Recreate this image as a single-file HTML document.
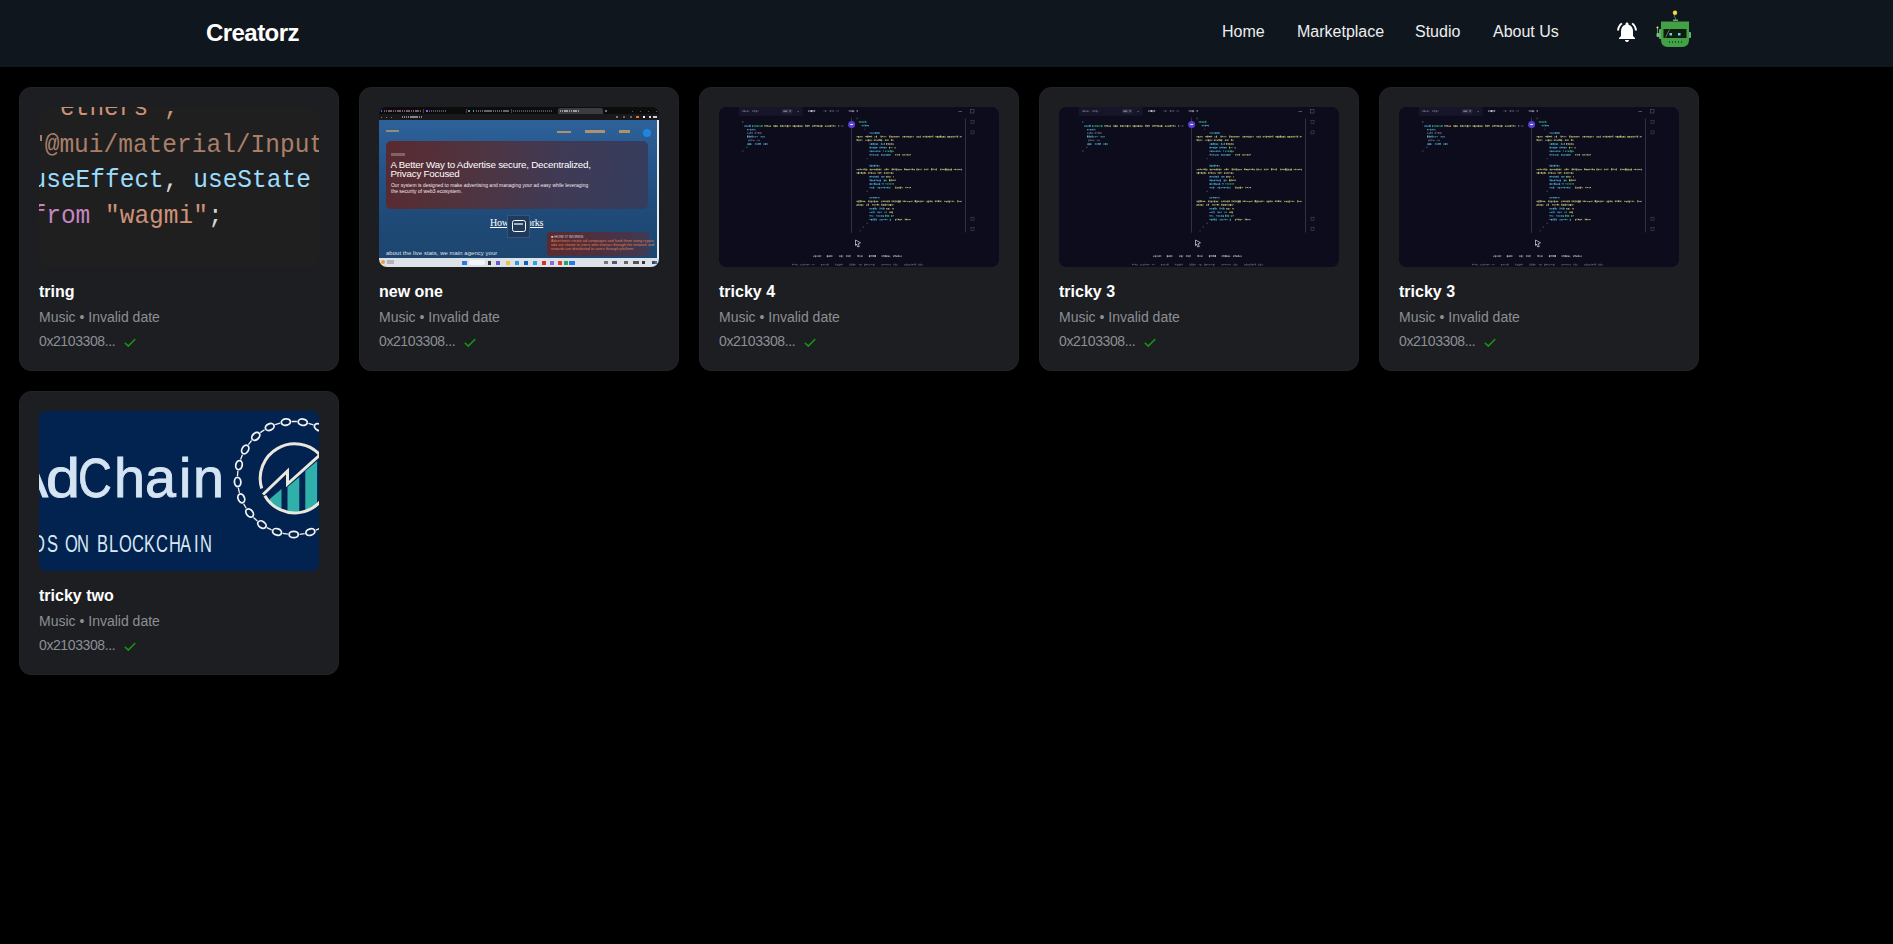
<!DOCTYPE html>
<html><head><meta charset="utf-8">
<style>
*{box-sizing:border-box;margin:0;padding:0}
html,body{width:1893px;height:944px;background:#000;overflow:hidden;font-family:"Liberation Sans",sans-serif}
.nav{position:absolute;left:0;top:0;width:1893px;height:67px;background:#10161d;border-bottom:1px solid #0e181c}
.brand{position:absolute;left:206px;top:17.5px;font-size:24px;font-weight:700;color:#fff;line-height:30px;letter-spacing:-0.55px}
.link{position:absolute;top:22px;font-size:16px;color:#eceef0;line-height:20px}
.card{position:absolute;width:320px;height:284px;background:#1d1e22;border-radius:12px;border:1px solid #222327}
.thumb{position:absolute;left:19px;top:19px;width:280px;height:160px;border-radius:8px;overflow:hidden;background:#1e1e1e}
.thumb svg{position:absolute;left:0;top:0}
.title{position:absolute;left:19px;top:194px;font-size:16px;font-weight:700;color:#fff;line-height:20px}
.meta{position:absolute;left:19px;top:220px;font-size:14px;color:#8c8f94;line-height:18px}
.addr{position:absolute;left:19px;top:244px;font-size:14px;color:#8c8f94;line-height:18px;letter-spacing:-0.4px}
.chk{position:absolute;left:104px;top:250px;width:12px;height:9px;overflow:visible}
.code{position:absolute;transform:scaleY(1.08);transform-origin:0 24px;font-family:"Liberation Mono",monospace;font-size:24.5px;line-height:36px;white-space:pre;left:-4.5px}
</style></head><body>
<div class="nav">
  <div class="brand">Creatorz</div>
  <div class="link" style="left:1222px">Home</div>
  <div class="link" style="left:1297px">Marketplace</div>
  <div class="link" style="left:1415px">Studio</div>
  <div class="link" style="left:1493px">About Us</div>
  <svg style="position:absolute;left:1615px;top:19.5px" width="24" height="24" viewBox="0 0 24 24"><path fill="#fff" d="M7.58 4.08 6.15 2.65C3.75 4.48 2.17 7.3 2.03 10.5h2c.15-2.65 1.51-4.97 3.55-6.42zm12.39 6.42h2c-.15-3.2-1.73-6.02-4.12-7.850l-1.42 1.43c2.02 1.45 3.39 3.77 3.54 6.42zM18 11c0-3.07-1.64-5.64-4.5-6.32V4c0-.83-.67-1.5-1.5-1.5s-1.5.67-1.5 1.5v.68C7.63 5.360 6 7.92 6 11v5l-2 2v1h16v-1l-2-2v-5zm-6 11c.14 0 .27-.01.4-.04.65-.14 1.18-.58 1.44-1.180.1-.24.15-.5.15-.78h-4c.01 1.1.9 2 2.01 2z"/></svg>
  <svg style="position:absolute;left:1650px;top:8px" width="48" height="44" viewBox="1650 8 48 44">
    <!-- antenna -->
    <path d="M1675 14.5 Q1673.6 16.5 1675.2 18 Q1676.2 19 1675.6 20.2" fill="none" stroke="#3f9a48" stroke-width="0.9"/>
    <circle cx="1675" cy="12.8" r="2.2" fill="#f5d846"/>
    <rect x="1673" y="19.5" width="5" height="1.5" fill="#6aa86e"/>
    <line x1="1657.5" y1="28" x2="1657.5" y2="34" stroke="#7fae7f" stroke-width="0.8"/>
    <circle cx="1657.5" cy="27.5" r="1.1" fill="#f3d27a"/>
    <!-- ears -->
    <rect x="1659" y="29" width="3" height="10" rx="1" fill="#5fae66"/>
    <rect x="1656.5" y="33" width="3" height="4" rx="1" fill="#7bbd7e"/>
    <rect x="1688" y="32" width="3" height="6" rx="1" fill="#6cb26f"/>
    <!-- head -->
    <path d="M1661 21.5 H1689 V40 Q1689 47 1682 47 H1668 Q1661 47 1661 40 Z" fill="#43a047"/>
    <rect x="1663.5" y="29" width="23" height="9" fill="#0d1d0c"/>
    <line x1="1665.5" y1="37.5" x2="1669.5" y2="29.5" stroke="#8a8f8a" stroke-width="0.7"/>
    <rect x="1669.5" y="33" width="2.5" height="2.5" fill="#79c8f0"/>
    <rect x="1678" y="33" width="2.5" height="2.5" fill="#79c8f0"/>
    <g fill="#1f5a22"><rect x="1669" y="41" width="1" height="2"/><rect x="1672" y="41" width="1" height="2"/><rect x="1675" y="41" width="1" height="2"/><rect x="1678" y="41" width="1" height="2"/><rect x="1681" y="41" width="1" height="2"/></g>
  </svg>
</div>
<div class="card" style="left:19px;top:87px">
  <div class="thumb" style="background:#1f1f1f">
    <div class="code" style="top:-16.3px;left:6.3px;color:#ce9178"> ethers";</div>
    <div style="position:absolute;left:0.5px;top:27.5px;width:2px;height:6px;background:#a87c66"></div>
    <div class="code" style="top:21.4px;left:-9px;color:#a97f6a">'@mui/material/Input</div>
    <div class="code" style="top:56.3px;left:-7.5px;color:#9cdcfe">useEffect<span style="color:#d4d4d4">,</span> useState</div>
    <div class="code" style="top:92px;left:-7.5px;color:#c586c0">from <span style="color:#ce9178">"wagmi"</span><span style="color:#d4d4d4">;</span></div>
  </div>
  <div class="title">tring</div>
  <div class="meta">Music • Invalid date</div>
  <div class="addr">0x2103308...</div>
  <svg class="chk" viewBox="0 0 12 9"><path d="M0.8 4.7 L4.3 8.1 L11.3 0.9" fill="none" stroke="#12990f" stroke-width="1.5"/></svg>
</div>
<div class="card" style="left:359px;top:87px">
  <div class="thumb" style="background:#1b1c1f">
    <!-- tab strip -->
    <div style="position:absolute;left:0;top:0;width:280px;height:7px;background:#0c0c0d"></div>
    <div style="position:absolute;left:44px;top:2px;width:0.6px;height:4px;background:#444"></div>
    <div style="position:absolute;left:87px;top:2px;width:0.6px;height:4px;background:#444"></div>
    <div style="position:absolute;left:132px;top:2px;width:0.6px;height:4px;background:#444"></div>
    <div style="position:absolute;left:179px;top:0.8px;width:44.5px;height:6.2px;background:#3b3c3f;border-radius:2px 2px 0 0"></div>
    <div style="position:absolute;left:2px;top:2.8px;width:1.3px;height:2.2px;background:#3d6ef0"></div>
    <div style="position:absolute;left:5px;top:3px;width:38px;height:1.8px;background:repeating-linear-gradient(90deg,#c9b 0 1.2px,transparent 1.2px 1.8px);opacity:.55"></div>
    <div style="position:absolute;left:47px;top:2.8px;width:1.6px;height:2px;background:#8a5cf0"></div>
    <div style="position:absolute;left:50px;top:3px;width:17px;height:1.8px;background:repeating-linear-gradient(90deg,#99c 0 1.2px,transparent 1.2px 2px);opacity:.5"></div>
    <div style="position:absolute;left:89px;top:3px;width:1.5px;height:1.8px;background:#ddd;opacity:.6"></div>
    <div style="position:absolute;left:93.5px;top:2.8px;width:1.4px;height:2.2px;background:#20b8d8"></div>
    <div style="position:absolute;left:97px;top:3px;width:34px;height:1.8px;background:repeating-linear-gradient(90deg,#bbc 0 1.2px,transparent 1.2px 1.9px);opacity:.5"></div>
    <div style="position:absolute;left:134px;top:3px;width:40px;height:1.8px;background:repeating-linear-gradient(90deg,#aab 0 1.2px,transparent 1.2px 2px);opacity:.45"></div>
    <div style="position:absolute;left:181px;top:3px;width:20px;height:1.8px;background:repeating-linear-gradient(90deg,#dde 0 1.2px,transparent 1.2px 1.8px);opacity:.6"></div>
    <div style="position:absolute;left:226px;top:3px;width:1.5px;height:1.8px;background:#bbb;opacity:.6"></div>
    <div style="position:absolute;left:253px;top:3.5px;width:25px;height:1px;background:repeating-linear-gradient(90deg,#aaa 0 1px,transparent 1px 8px);opacity:.5"></div>
    <!-- address bar -->
    <div style="position:absolute;left:0;top:7px;width:280px;height:6px;background:#19191b"></div>
    <div style="position:absolute;left:2px;top:9.5px;width:14px;height:1.2px;background:repeating-linear-gradient(90deg,#bbb 0 1.5px,transparent 1.5px 5px);opacity:.6"></div>
    <div style="position:absolute;left:23px;top:9px;width:21px;height:1.8px;background:repeating-linear-gradient(90deg,#ccd 0 1.3px,transparent 1.3px 1.9px);opacity:.6"></div>
    <div style="position:absolute;left:237px;top:8.5px;width:41px;height:2.5px;background:linear-gradient(90deg,#777 0 5%,transparent 5% 17%,#666 17% 21%,transparent 21% 33%,#666 33% 38%,transparent 38% 49%,#e8762c 49% 56%,transparent 56% 65%,#f4f4f4 65% 71%,transparent 71% 81%,#ddd 81% 85%,transparent 85% 90%,#ccd 90% 100%)"></div>
    <!-- page -->
    <div style="position:absolute;left:0;top:13px;width:279px;height:138px;background:linear-gradient(180deg,#2d6299 0%,#255489 35%,#1f4a78 70%,#1d466f 100%)"></div>
    <div style="position:absolute;left:278px;top:13px;width:1.5px;height:138px;background:#e8eef5"></div>
    <div style="position:absolute;left:7px;top:23px;width:13px;height:2px;background:#c9a06a;opacity:.7"></div>
    <div style="position:absolute;left:178px;top:24px;width:14px;height:2px;background:#e0a060;opacity:.75"></div>
    <div style="position:absolute;left:206px;top:23px;width:20px;height:3px;background:#e0a060;opacity:.75"></div>
    <div style="position:absolute;left:240px;top:23px;width:11px;height:3px;background:#e0a060;opacity:.75"></div>
    <div style="position:absolute;left:264px;top:21.5px;width:8px;height:8px;background:#1f86e0;border-radius:50%"></div>
    <!-- hero -->
    <div style="position:absolute;left:7.3px;top:34.2px;width:262px;height:68px;border-radius:5px;background:linear-gradient(100deg,#5a2a30 0%,#4e3440 35%,#403a55 65%,#343d5e 100%)"></div>
    <div style="position:absolute;left:12px;top:46px;width:14px;height:3px;background:#9a8a8a;opacity:.6"></div>
    <div style="position:absolute;left:11.5px;top:53px;font-size:9.76px;line-height:9.2px;color:#fff;white-space:nowrap;letter-spacing:-0.2px">A Better Way to Advertise secure, Decentralized,<br>Privacy Focused</div>
    <div style="position:absolute;left:12px;top:76px;font-size:4.9px;line-height:5.5px;color:#f0eaf0;white-space:nowrap;letter-spacing:0.05px">Our system is designed to make advertising and managing your ad easy while leveraging<br>the security of web3 ecosystem.</div>
    <!-- how it works -->
    <div style="position:absolute;left:111px;top:111px;font-family:'Liberation Serif',serif;font-size:10px;line-height:10px;color:#fff;text-decoration:underline;white-space:nowrap;letter-spacing:-0.2px">How it Works</div>
    <div style="position:absolute;left:128.4px;top:108.2px;width:23px;height:23.3px;background:#1f3a5b;border:0.5px solid #35557a"></div>
    <div style="position:absolute;left:133px;top:113.3px;width:13.8px;height:12.2px;border:1.2px solid #fff;border-radius:2.5px"></div>
    <div style="position:absolute;left:135px;top:116px;width:9px;height:2px;background:#fff;opacity:.6"></div>
    <!-- small box -->
    <div style="position:absolute;left:168.2px;top:125px;width:101.6px;height:23.8px;border-radius:3px;background:linear-gradient(100deg,#5a2b30 0%,#4d3040 50%,#3d3a55 100%)"></div>
    <div style="position:absolute;left:172px;top:128px;font-size:3.8px;line-height:4.1px;color:#e8e0e0;white-space:nowrap;opacity:.85">■ HOW IT WORKS</div>
    <div style="position:absolute;left:172px;top:132px;font-size:3.6px;line-height:4.1px;color:#e2814f;white-space:nowrap;letter-spacing:0.1px">Advertisers create ad campaigns and fund them using crypto.<br>ads are shown to users who interact through the network and<br>rewards are distributed to users through platform</div>
    <div style="position:absolute;left:7px;top:143px;font-size:5.85px;line-height:7px;color:#eef2f7;white-space:nowrap;letter-spacing:0.1px;opacity:.9">about the live stats, we main agency your</div>
    <!-- taskbar -->
    <div style="position:absolute;left:0;top:151px;width:280px;height:9px;background:#dde1e8"></div>
    <div style="position:absolute;left:2px;top:153px;width:4px;height:4px;background:#f0a030;border-radius:50%"></div>
    <div style="position:absolute;left:8px;top:153px;width:7px;height:4px;background:#889;opacity:.5"></div>
    <div style="position:absolute;left:83px;top:153.5px;width:5px;height:4px;background:#2a7be0"></div>
    <div style="position:absolute;left:90px;top:153px;width:16px;height:5px;background:#f4f5f8;border-radius:2px"></div>
    <div style="position:absolute;left:109px;top:153.5px;width:80px;height:4px;background:linear-gradient(90deg,#333 0 4%,transparent 4% 10%,#6a5acd 10% 15%,transparent 15% 22%,#f0c040 22% 28%,transparent 28% 34%,#2a9be0 34% 39%,transparent 39% 45%,#1060c0 45% 50%,transparent 50% 56%,#30a0e0 56% 61%,transparent 61% 67%,#d03030 67% 72%,transparent 72% 78%,#8a6ae0 78% 83%,transparent 83% 88%,#e04030 88% 93%,transparent 93% 95%,#30a060 95% 100%)"></div>
    <div style="position:absolute;left:190px;top:153.5px;width:6px;height:4px;background:#2a7be0"></div>
    <div style="position:absolute;left:225px;top:154px;width:53px;height:3px;background:linear-gradient(90deg,#777 0 8%,transparent 8% 15%,#557 15% 24%,transparent 24% 38%,#666 38% 46%,transparent 46% 55%,#555 55% 66%,transparent 66% 72%,#333 72% 78%,transparent 78% 90%,#445 90% 96%,#2a7be0 96%)"></div>
  </div>
  <div class="title">new one</div>
  <div class="meta">Music • Invalid date</div>
  <div class="addr">0x2103308...</div>
  <svg class="chk" viewBox="0 0 12 9"><path d="M0.8 4.7 L4.3 8.1 L11.3 0.9" fill="none" stroke="#12990f" stroke-width="1.5"/></svg>
</div>
<svg width="0" height="0" style="position:absolute"><defs><g id="codeimg"><rect x="0" y="0" width="280" height="160" fill="#0c0c1d"/>
<rect x="19.7" y="0" width="64" height="8.8" fill="#16152a"/>
<rect x="23.40" y="3.28" width="1.28" height="1.6" fill="#8a8a9a" opacity="0.67"/><rect x="24.90" y="3.35" width="1.40" height="1.6" fill="#8a8a9a" opacity="0.66"/><rect x="26.48" y="3.62" width="1.15" height="1.0" fill="#8a8a9a" opacity="0.68"/><rect x="28.01" y="3.49" width="1.30" height="1.6" fill="#8a8a9a" opacity="0.63"/><rect x="29.67" y="3.73" width="0.80" height="1.0" fill="#8a8a9a" opacity="0.50"/><rect x="33.29" y="3.38" width="1.39" height="1.4" fill="#8a8a9a" opacity="0.67"/><rect x="35.01" y="3.10" width="1.32" height="1.6" fill="#8a8a9a" opacity="0.51"/><rect x="36.71" y="3.30" width="1.20" height="2.0" fill="#8a8a9a" opacity="0.67"/><rect x="38.31" y="3.51" width="1.16" height="1.2" fill="#8a8a9a" opacity="0.50"/>
<rect x="63" y="2" width="10.5" height="4.4" rx="1" fill="#2a2838"/>
<rect x="64.50" y="3.78" width="1.15" height="1.0" fill="#e0e0e8" opacity="0.76"/><rect x="65.80" y="3.59" width="1.10" height="1.0" fill="#e0e0e8" opacity="0.80"/><rect x="67.19" y="3.61" width="1.04" height="1.2" fill="#e0e0e8" opacity="0.62"/><rect x="70.47" y="3.45" width="1.38" height="1.0" fill="#e0e0e8" opacity="0.73"/>
<rect x="78.5" y="4.0" width="1.5" height="1" fill="#888" opacity="0.6"/>
<rect x="89.00" y="3.48" width="1.34" height="1.2" fill="#f0f0f5" opacity="0.64"/><rect x="90.75" y="3.15" width="1.07" height="1.6" fill="#f0f0f5" opacity="0.70"/><rect x="92.04" y="3.02" width="1.13" height="2.0" fill="#f0f0f5" opacity="0.82"/><rect x="93.40" y="3.16" width="1.20" height="2.0" fill="#f0f0f5" opacity="0.62"/><rect x="95.09" y="3.20" width="1.11" height="1.4" fill="#f0f0f5" opacity="0.75"/>
<rect x="104.50" y="3.31" width="1.10" height="1.2" fill="#8a8a9a" opacity="0.49"/><rect x="105.97" y="3.09" width="1.06" height="2.0" fill="#8a8a9a" opacity="0.52"/><rect x="107.49" y="3.42" width="0.68" height="1.2" fill="#8a8a9a" opacity="0.46"/><rect x="110.76" y="2.98" width="1.31" height="2.0" fill="#8a8a9a" opacity="0.59"/><rect x="112.53" y="3.12" width="1.30" height="1.6" fill="#8a8a9a" opacity="0.44"/><rect x="114.16" y="3.20" width="1.02" height="1.6" fill="#8a8a9a" opacity="0.57"/><rect x="117.12" y="3.45" width="1.36" height="1.0" fill="#8a8a9a" opacity="0.51"/><rect x="118.86" y="3.51" width="1.14" height="1.0" fill="#8a8a9a" opacity="0.59"/>
<rect x="129.70" y="3.42" width="1.22" height="1.0" fill="#f0f0f5" opacity="0.67"/><rect x="131.26" y="3.54" width="1.49" height="1.0" fill="#f0f0f5" opacity="0.82"/><rect x="133.24" y="3.13" width="1.33" height="2.0" fill="#f0f0f5" opacity="0.63"/><rect x="134.73" y="3.48" width="0.39" height="1.4" fill="#f0f0f5" opacity="0.84"/><rect x="137.58" y="3.25" width="1.37" height="1.4" fill="#f0f0f5" opacity="0.61"/>
<rect x="239.5" y="4.1" width="3.5" height="0.8" fill="#777" opacity="0.8"/>
<rect x="251.5" y="2.5" width="3.5" height="3.5" fill="none" stroke="#999" stroke-width="0.5" opacity="0.6"/>
<rect x="23.00" y="14.47" width="1.47" height="1.2" fill="#6a6a80" opacity="0.78"/>
<rect x="25.30" y="18.38" width="1.44" height="1.6" fill="#5fd0fa" opacity="0.57"/><rect x="27.06" y="18.15" width="1.01" height="1.6" fill="#5fd0fa" opacity="0.56"/><rect x="28.24" y="18.70" width="1.05" height="1.0" fill="#5fd0fa" opacity="0.77"/><rect x="29.69" y="17.98" width="1.19" height="2.0" fill="#5fd0fa" opacity="0.67"/><rect x="31.23" y="17.81" width="0.77" height="2.0" fill="#5fd0fa" opacity="0.70"/>
<rect x="33.00" y="18.06" width="1.25" height="2.0" fill="#48dc96" opacity="0.63"/><rect x="34.71" y="18.47" width="1.18" height="1.2" fill="#48dc96" opacity="0.57"/><rect x="36.11" y="18.20" width="1.45" height="1.6" fill="#48dc96" opacity="0.58"/><rect x="37.85" y="18.32" width="1.13" height="1.6" fill="#48dc96" opacity="0.69"/><rect x="39.20" y="18.43" width="1.11" height="1.2" fill="#48dc96" opacity="0.60"/><rect x="40.50" y="18.58" width="1.25" height="1.0" fill="#48dc96" opacity="0.74"/><rect x="42.00" y="18.19" width="1.08" height="1.6" fill="#48dc96" opacity="0.73"/><rect x="43.52" y="18.00" width="0.48" height="2.0" fill="#48dc96" opacity="0.60"/>
<rect x="45.00" y="18.41" width="1.04" height="1.0" fill="#f6f48e" opacity="0.71"/><rect x="46.42" y="18.22" width="1.14" height="1.4" fill="#f6f48e" opacity="0.75"/><rect x="47.72" y="18.08" width="1.07" height="1.6" fill="#f6f48e" opacity="0.74"/><rect x="49.03" y="18.69" width="1.39" height="1.0" fill="#f6f48e" opacity="0.59"/><rect x="50.61" y="18.48" width="1.27" height="1.4" fill="#f6f48e" opacity="0.72"/><rect x="54.29" y="18.21" width="1.01" height="1.6" fill="#f6f48e" opacity="0.57"/><rect x="55.52" y="18.08" width="1.39" height="2.0" fill="#f6f48e" opacity="0.68"/><rect x="57.27" y="18.34" width="1.38" height="1.6" fill="#f6f48e" opacity="0.73"/><rect x="61.01" y="18.18" width="1.19" height="1.6" fill="#f6f48e" opacity="0.71"/><rect x="62.67" y="18.06" width="1.19" height="2.0" fill="#f6f48e" opacity="0.68"/><rect x="64.30" y="18.36" width="1.17" height="1.4" fill="#f6f48e" opacity="0.61"/><rect x="65.87" y="18.39" width="1.41" height="1.0" fill="#f6f48e" opacity="0.78"/><rect x="67.77" y="18.19" width="1.49" height="2.0" fill="#f6f48e" opacity="0.78"/><rect x="69.50" y="18.44" width="1.36" height="1.0" fill="#f6f48e" opacity="0.58"/><rect x="71.17" y="18.29" width="0.88" height="1.4" fill="#f6f48e" opacity="0.57"/><rect x="73.64" y="18.37" width="1.09" height="1.4" fill="#f6f48e" opacity="0.78"/><rect x="75.04" y="18.14" width="1.50" height="2.0" fill="#f6f48e" opacity="0.73"/><rect x="77.02" y="18.60" width="1.25" height="1.0" fill="#f6f48e" opacity="0.67"/><rect x="78.61" y="18.06" width="1.42" height="2.0" fill="#f6f48e" opacity="0.69"/><rect x="80.47" y="18.37" width="1.28" height="1.4" fill="#f6f48e" opacity="0.79"/><rect x="82.21" y="18.44" width="1.30" height="1.4" fill="#f6f48e" opacity="0.79"/><rect x="86.20" y="17.80" width="1.27" height="2.0" fill="#f6f48e" opacity="0.65"/><rect x="87.80" y="18.22" width="1.02" height="1.6" fill="#f6f48e" opacity="0.80"/><rect x="89.02" y="18.23" width="1.05" height="1.2" fill="#f6f48e" opacity="0.69"/><rect x="90.36" y="18.11" width="0.65" height="1.6" fill="#f6f48e" opacity="0.67"/><rect x="93.16" y="18.21" width="1.45" height="1.6" fill="#f6f48e" opacity="0.59"/><rect x="94.90" y="18.15" width="1.01" height="1.4" fill="#f6f48e" opacity="0.75"/><rect x="96.08" y="18.20" width="1.10" height="1.2" fill="#f6f48e" opacity="0.63"/><rect x="97.58" y="18.04" width="1.12" height="1.6" fill="#f6f48e" opacity="0.74"/><rect x="98.89" y="18.39" width="1.26" height="1.4" fill="#f6f48e" opacity="0.73"/><rect x="100.60" y="18.33" width="1.01" height="1.6" fill="#f6f48e" opacity="0.71"/><rect x="101.95" y="18.06" width="1.43" height="2.0" fill="#f6f48e" opacity="0.69"/><rect x="105.92" y="18.46" width="1.12" height="1.4" fill="#f6f48e" opacity="0.64"/><rect x="107.29" y="18.51" width="1.46" height="1.2" fill="#f6f48e" opacity="0.61"/><rect x="108.94" y="18.49" width="1.44" height="1.2" fill="#f6f48e" opacity="0.62"/><rect x="110.57" y="18.22" width="1.42" height="1.6" fill="#f6f48e" opacity="0.73"/><rect x="112.20" y="18.34" width="1.31" height="1.0" fill="#f6f48e" opacity="0.70"/><rect x="113.79" y="18.15" width="1.41" height="1.4" fill="#f6f48e" opacity="0.68"/><rect x="115.62" y="18.52" width="1.01" height="1.2" fill="#f6f48e" opacity="0.68"/><rect x="119.27" y="18.06" width="0.73" height="1.6" fill="#f6f48e" opacity="0.60"/>
<rect x="120.00" y="18.53" width="1.46" height="1.0" fill="#6a6a80" opacity="0.44"/><rect x="121.85" y="18.43" width="1.04" height="1.0" fill="#6a6a80" opacity="0.50"/><rect x="123.22" y="17.95" width="1.22" height="2.0" fill="#6a6a80" opacity="0.53"/>
<rect x="28.00" y="21.96" width="1.18" height="1.4" fill="#5fd0fa" opacity="0.64"/><rect x="29.39" y="22.13" width="1.26" height="1.0" fill="#5fd0fa" opacity="0.62"/><rect x="31.09" y="21.93" width="1.44" height="1.6" fill="#5fd0fa" opacity="0.64"/><rect x="32.88" y="21.91" width="1.17" height="1.4" fill="#5fd0fa" opacity="0.62"/><rect x="34.46" y="21.75" width="1.08" height="1.6" fill="#5fd0fa" opacity="0.68"/><rect x="35.88" y="22.01" width="0.52" height="1.6" fill="#5fd0fa" opacity="0.70"/>
<rect x="28.00" y="25.66" width="1.23" height="1.0" fill="#c8c8d0" opacity="0.55"/><rect x="29.70" y="25.48" width="1.02" height="1.4" fill="#c8c8d0" opacity="0.49"/><rect x="30.99" y="24.87" width="1.33" height="2.0" fill="#c8c8d0" opacity="0.40"/><rect x="32.65" y="25.48" width="1.25" height="1.2" fill="#c8c8d0" opacity="0.51"/><rect x="35.61" y="25.28" width="1.37" height="1.4" fill="#c8c8d0" opacity="0.47"/><rect x="37.40" y="25.34" width="1.32" height="1.0" fill="#c8c8d0" opacity="0.43"/><rect x="39.19" y="24.97" width="1.28" height="2.0" fill="#c8c8d0" opacity="0.47"/><rect x="40.91" y="25.32" width="1.05" height="1.6" fill="#c8c8d0" opacity="0.40"/><rect x="42.32" y="25.45" width="0.68" height="1.0" fill="#c8c8d0" opacity="0.54"/>
<rect x="28.00" y="28.52" width="1.27" height="2.0" fill="#5fd0fa" opacity="0.84"/><rect x="29.57" y="28.62" width="1.26" height="2.0" fill="#5fd0fa" opacity="0.73"/><rect x="31.15" y="29.07" width="1.13" height="1.4" fill="#5fd0fa" opacity="0.79"/><rect x="32.45" y="28.52" width="1.39" height="2.0" fill="#5fd0fa" opacity="0.63"/><rect x="34.25" y="29.10" width="1.19" height="1.4" fill="#5fd0fa" opacity="0.61"/><rect x="35.94" y="29.32" width="1.47" height="1.0" fill="#5fd0fa" opacity="0.65"/><rect x="37.81" y="28.92" width="0.89" height="1.2" fill="#5fd0fa" opacity="0.62"/><rect x="41.57" y="29.14" width="1.48" height="1.2" fill="#5fd0fa" opacity="0.62"/><rect x="43.41" y="29.24" width="1.23" height="1.2" fill="#5fd0fa" opacity="0.69"/><rect x="44.85" y="29.17" width="0.85" height="1.2" fill="#5fd0fa" opacity="0.71"/>
<rect x="29.00" y="32.53" width="1.39" height="2.0" fill="#c8c8d0" opacity="0.33"/><rect x="30.64" y="32.45" width="1.06" height="1.6" fill="#c8c8d0" opacity="0.44"/><rect x="32.13" y="32.61" width="1.31" height="1.4" fill="#c8c8d0" opacity="0.40"/><rect x="33.85" y="32.85" width="1.35" height="1.2" fill="#c8c8d0" opacity="0.42"/><rect x="35.41" y="32.95" width="0.36" height="1.2" fill="#c8c8d0" opacity="0.32"/><rect x="37.68" y="32.79" width="1.31" height="1.0" fill="#c8c8d0" opacity="0.35"/><rect x="39.41" y="32.82" width="1.46" height="1.2" fill="#c8c8d0" opacity="0.40"/>
<rect x="28.00" y="36.54" width="1.17" height="1.2" fill="#5fd0fa" opacity="0.61"/><rect x="29.36" y="36.14" width="1.40" height="2.0" fill="#5fd0fa" opacity="0.79"/><rect x="31.07" y="36.32" width="1.37" height="1.6" fill="#5fd0fa" opacity="0.69"/><rect x="35.88" y="36.37" width="1.27" height="1.2" fill="#5fd0fa" opacity="0.69"/><rect x="37.34" y="36.52" width="1.44" height="1.0" fill="#5fd0fa" opacity="0.71"/><rect x="39.12" y="36.12" width="1.41" height="1.6" fill="#5fd0fa" opacity="0.79"/><rect x="40.71" y="35.83" width="1.10" height="2.0" fill="#5fd0fa" opacity="0.67"/><rect x="44.35" y="36.36" width="1.07" height="1.4" fill="#5fd0fa" opacity="0.68"/><rect x="45.89" y="36.23" width="1.16" height="1.6" fill="#5fd0fa" opacity="0.83"/><rect x="47.53" y="36.21" width="0.97" height="1.6" fill="#5fd0fa" opacity="0.85"/>
<rect x="27.0" y="39.7" width="1.5" height="1.2" fill="#6a6a80" opacity="0.6"/>
<rect x="23.0" y="43.4" width="1.5" height="1.2" fill="#6a6a80" opacity="0.6"/>
<rect x="132.2" y="10.6" width="0.8" height="115" fill="#3a3a52"/>
<rect x="246.2" y="11.5" width="0.8" height="114" fill="#3a3a52"/>
<circle cx="132.6" cy="17.5" r="3.5" fill="#5b3fd8"/>
<rect x="131.2" y="17.1" width="2.8" height="0.9" fill="#fff" opacity="1"/>
<rect x="137.50" y="10.40" width="1.36" height="2.0" fill="#6a6a80" opacity="0.49"/>
<rect x="139.70" y="14.40" width="1.19" height="1.2" fill="#48dc96" opacity="0.65"/><rect x="141.18" y="13.93" width="1.08" height="2.0" fill="#48dc96" opacity="0.60"/><rect x="142.67" y="14.32" width="1.44" height="1.4" fill="#48dc96" opacity="0.61"/><rect x="144.28" y="14.39" width="1.08" height="1.4" fill="#48dc96" opacity="0.72"/><rect x="145.79" y="13.82" width="1.03" height="2.0" fill="#48dc96" opacity="0.69"/><rect x="147.09" y="14.56" width="0.91" height="1.0" fill="#48dc96" opacity="0.58"/>
<rect x="142.60" y="18.08" width="1.32" height="1.2" fill="#5fd0fa" opacity="0.68"/><rect x="144.39" y="17.76" width="1.17" height="1.6" fill="#5fd0fa" opacity="0.64"/><rect x="146.05" y="17.80" width="1.34" height="1.6" fill="#5fd0fa" opacity="0.75"/><rect x="147.56" y="18.06" width="1.31" height="1.0" fill="#5fd0fa" opacity="0.76"/><rect x="149.25" y="17.93" width="0.75" height="1.6" fill="#5fd0fa" opacity="0.77"/>
<rect x="145.00" y="21.77" width="1.36" height="1.0" fill="#6a6a80" opacity="0.50"/>
<rect x="150.50" y="25.33" width="1.19" height="1.2" fill="#5fd0fa" opacity="0.65"/><rect x="152.02" y="25.49" width="1.14" height="1.0" fill="#5fd0fa" opacity="0.74"/><rect x="153.42" y="25.56" width="1.08" height="1.2" fill="#5fd0fa" opacity="0.74"/><rect x="154.65" y="25.43" width="1.24" height="1.0" fill="#5fd0fa" opacity="0.61"/><rect x="156.17" y="25.09" width="1.29" height="2.0" fill="#5fd0fa" opacity="0.70"/><rect x="157.69" y="25.26" width="1.09" height="1.4" fill="#5fd0fa" opacity="0.78"/><rect x="159.26" y="24.99" width="1.31" height="2.0" fill="#5fd0fa" opacity="0.62"/>
<rect x="137.50" y="29.19" width="1.27" height="1.0" fill="#f6f48e" opacity="0.61"/><rect x="138.94" y="29.09" width="1.47" height="1.6" fill="#f6f48e" opacity="0.75"/><rect x="140.84" y="29.26" width="1.39" height="1.0" fill="#f6f48e" opacity="0.62"/><rect x="142.38" y="28.98" width="1.20" height="1.4" fill="#f6f48e" opacity="0.62"/><rect x="146.39" y="29.00" width="1.39" height="1.2" fill="#f6f48e" opacity="0.77"/><rect x="148.11" y="28.61" width="1.32" height="2.0" fill="#f6f48e" opacity="0.69"/><rect x="149.63" y="29.08" width="1.39" height="1.0" fill="#f6f48e" opacity="0.78"/><rect x="151.22" y="28.91" width="1.06" height="1.4" fill="#f6f48e" opacity="0.73"/><rect x="152.46" y="28.73" width="0.67" height="1.6" fill="#f6f48e" opacity="0.74"/><rect x="155.39" y="29.27" width="1.09" height="1.2" fill="#f6f48e" opacity="0.58"/><rect x="156.92" y="28.67" width="1.10" height="2.0" fill="#f6f48e" opacity="0.68"/><rect x="161.51" y="28.62" width="1.20" height="2.0" fill="#f6f48e" opacity="0.67"/><rect x="163.11" y="28.94" width="1.18" height="1.2" fill="#f6f48e" opacity="0.65"/><rect x="164.60" y="29.26" width="1.48" height="1.0" fill="#f6f48e" opacity="0.56"/><rect x="166.37" y="29.02" width="0.98" height="1.2" fill="#f6f48e" opacity="0.59"/><rect x="170.14" y="28.56" width="1.36" height="2.0" fill="#f6f48e" opacity="0.71"/><rect x="171.98" y="29.10" width="1.37" height="1.4" fill="#f6f48e" opacity="0.69"/><rect x="173.53" y="28.99" width="1.09" height="1.6" fill="#f6f48e" opacity="0.64"/><rect x="175.11" y="28.98" width="1.28" height="1.4" fill="#f6f48e" opacity="0.65"/><rect x="176.57" y="29.17" width="1.31" height="1.2" fill="#f6f48e" opacity="0.73"/><rect x="178.10" y="28.94" width="1.20" height="1.6" fill="#f6f48e" opacity="0.58"/><rect x="179.53" y="29.17" width="1.08" height="1.0" fill="#f6f48e" opacity="0.75"/><rect x="183.47" y="29.21" width="1.07" height="1.2" fill="#f6f48e" opacity="0.76"/><rect x="184.83" y="28.95" width="1.17" height="1.6" fill="#f6f48e" opacity="0.73"/><rect x="186.36" y="29.16" width="1.16" height="1.2" fill="#f6f48e" opacity="0.71"/><rect x="187.67" y="28.92" width="1.17" height="1.4" fill="#f6f48e" opacity="0.67"/><rect x="189.18" y="29.12" width="1.10" height="1.4" fill="#f6f48e" opacity="0.76"/><rect x="190.65" y="28.86" width="1.08" height="2.0" fill="#f6f48e" opacity="0.69"/><rect x="192.00" y="29.13" width="1.25" height="1.2" fill="#f6f48e" opacity="0.61"/><rect x="193.73" y="29.13" width="1.09" height="1.2" fill="#f6f48e" opacity="0.57"/><rect x="197.48" y="28.98" width="1.24" height="1.6" fill="#f6f48e" opacity="0.64"/><rect x="199.19" y="29.05" width="1.18" height="1.6" fill="#f6f48e" opacity="0.67"/><rect x="200.78" y="28.72" width="0.93" height="2.0" fill="#f6f48e" opacity="0.69"/><rect x="203.60" y="29.04" width="1.50" height="1.4" fill="#f6f48e" opacity="0.59"/><rect x="205.54" y="28.90" width="1.14" height="1.4" fill="#f6f48e" opacity="0.70"/><rect x="207.12" y="28.82" width="1.09" height="2.0" fill="#f6f48e" opacity="0.67"/><rect x="208.51" y="29.02" width="1.39" height="1.2" fill="#f6f48e" opacity="0.72"/><rect x="210.31" y="28.76" width="1.19" height="2.0" fill="#f6f48e" opacity="0.74"/><rect x="211.70" y="29.06" width="1.21" height="1.0" fill="#f6f48e" opacity="0.65"/><rect x="213.26" y="28.55" width="1.09" height="2.0" fill="#f6f48e" opacity="0.62"/><rect x="216.37" y="29.06" width="1.36" height="1.2" fill="#f6f48e" opacity="0.68"/><rect x="217.91" y="28.87" width="1.17" height="2.0" fill="#f6f48e" opacity="0.70"/><rect x="219.38" y="29.04" width="1.14" height="1.6" fill="#f6f48e" opacity="0.77"/><rect x="220.81" y="28.55" width="1.22" height="2.0" fill="#f6f48e" opacity="0.79"/><rect x="222.30" y="29.06" width="1.26" height="1.6" fill="#f6f48e" opacity="0.64"/><rect x="223.73" y="28.99" width="1.36" height="1.6" fill="#f6f48e" opacity="0.70"/><rect x="225.50" y="28.85" width="0.92" height="2.0" fill="#f6f48e" opacity="0.62"/><rect x="228.29" y="28.98" width="1.49" height="1.6" fill="#f6f48e" opacity="0.69"/><rect x="230.01" y="29.08" width="1.15" height="1.6" fill="#f6f48e" opacity="0.77"/><rect x="231.66" y="29.15" width="1.37" height="1.4" fill="#f6f48e" opacity="0.66"/><rect x="233.46" y="28.93" width="1.11" height="1.6" fill="#f6f48e" opacity="0.78"/><rect x="234.75" y="29.35" width="1.40" height="1.0" fill="#f6f48e" opacity="0.70"/><rect x="236.46" y="28.81" width="1.15" height="1.4" fill="#f6f48e" opacity="0.60"/><rect x="237.91" y="28.66" width="1.23" height="2.0" fill="#f6f48e" opacity="0.65"/><rect x="240.71" y="28.93" width="1.45" height="1.4" fill="#f6f48e" opacity="0.59"/><rect x="242.58" y="28.98" width="0.42" height="1.2" fill="#f6f48e" opacity="0.77"/>
<rect x="137.50" y="32.21" width="1.43" height="1.6" fill="#f6f48e" opacity="0.71"/><rect x="139.32" y="32.25" width="1.28" height="2.0" fill="#f6f48e" opacity="0.61"/><rect x="141.06" y="32.62" width="1.03" height="1.0" fill="#f6f48e" opacity="0.76"/><rect x="142.57" y="32.49" width="0.77" height="1.6" fill="#f6f48e" opacity="0.59"/><rect x="146.25" y="32.74" width="1.04" height="1.2" fill="#f6f48e" opacity="0.59"/><rect x="147.68" y="32.60" width="1.13" height="1.2" fill="#f6f48e" opacity="0.63"/><rect x="149.06" y="32.35" width="1.40" height="2.0" fill="#f6f48e" opacity="0.70"/><rect x="150.69" y="32.67" width="1.15" height="1.2" fill="#f6f48e" opacity="0.63"/><rect x="152.22" y="32.68" width="1.04" height="1.0" fill="#f6f48e" opacity="0.69"/><rect x="154.82" y="32.47" width="1.14" height="1.4" fill="#f6f48e" opacity="0.70"/><rect x="156.17" y="32.50" width="1.49" height="1.2" fill="#f6f48e" opacity="0.63"/><rect x="158.01" y="32.80" width="1.09" height="1.2" fill="#f6f48e" opacity="0.57"/><rect x="159.41" y="32.20" width="1.38" height="1.6" fill="#f6f48e" opacity="0.77"/><rect x="160.96" y="32.43" width="1.03" height="1.4" fill="#f6f48e" opacity="0.68"/><rect x="162.15" y="32.30" width="1.07" height="2.0" fill="#f6f48e" opacity="0.69"/><rect x="165.88" y="32.42" width="1.22" height="1.6" fill="#f6f48e" opacity="0.62"/><rect x="167.50" y="32.50" width="1.36" height="1.4" fill="#f6f48e" opacity="0.61"/><rect x="169.21" y="32.58" width="0.68" height="1.0" fill="#f6f48e" opacity="0.79"/><rect x="172.06" y="32.01" width="1.16" height="2.0" fill="#f6f48e" opacity="0.68"/><rect x="173.52" y="32.64" width="0.98" height="1.4" fill="#f6f48e" opacity="0.57"/>
<rect x="150.50" y="36.45" width="1.29" height="1.2" fill="#5fd0fa" opacity="0.57"/><rect x="152.09" y="36.10" width="1.35" height="2.0" fill="#5fd0fa" opacity="0.75"/><rect x="153.85" y="35.87" width="1.25" height="2.0" fill="#5fd0fa" opacity="0.62"/><rect x="155.31" y="36.11" width="1.35" height="2.0" fill="#5fd0fa" opacity="0.57"/><rect x="156.95" y="36.48" width="1.18" height="1.2" fill="#5fd0fa" opacity="0.79"/><rect x="158.33" y="36.19" width="0.93" height="2.0" fill="#5fd0fa" opacity="0.59"/><rect x="161.88" y="35.86" width="1.12" height="2.0" fill="#5fd0fa" opacity="0.65"/><rect x="163.25" y="36.69" width="1.21" height="1.0" fill="#5fd0fa" opacity="0.72"/><rect x="164.86" y="35.89" width="1.14" height="2.0" fill="#5fd0fa" opacity="0.62"/>
<rect x="167.00" y="36.22" width="1.47" height="1.4" fill="#f6f48e" opacity="0.79"/><rect x="168.94" y="36.36" width="1.11" height="1.2" fill="#f6f48e" opacity="0.72"/><rect x="170.22" y="36.17" width="1.17" height="2.0" fill="#f6f48e" opacity="0.60"/><rect x="171.84" y="36.35" width="1.47" height="1.2" fill="#f6f48e" opacity="0.75"/><rect x="173.53" y="36.52" width="1.17" height="1.2" fill="#f6f48e" opacity="0.75"/>
<rect x="150.50" y="39.78" width="1.38" height="1.6" fill="#5fd0fa" opacity="0.80"/><rect x="152.27" y="40.02" width="1.43" height="1.2" fill="#5fd0fa" opacity="0.66"/><rect x="153.87" y="39.95" width="1.14" height="1.4" fill="#5fd0fa" opacity="0.68"/><rect x="155.41" y="39.77" width="1.26" height="2.0" fill="#5fd0fa" opacity="0.73"/><rect x="156.91" y="40.09" width="1.18" height="1.2" fill="#5fd0fa" opacity="0.75"/><rect x="158.29" y="39.91" width="0.55" height="1.0" fill="#5fd0fa" opacity="0.64"/><rect x="160.47" y="39.67" width="1.16" height="2.0" fill="#5fd0fa" opacity="0.63"/><rect x="162.00" y="39.86" width="1.24" height="1.2" fill="#5fd0fa" opacity="0.70"/><rect x="163.40" y="39.79" width="1.16" height="1.6" fill="#5fd0fa" opacity="0.73"/><rect x="164.89" y="39.99" width="1.27" height="1.4" fill="#5fd0fa" opacity="0.72"/><rect x="166.36" y="39.91" width="1.10" height="1.4" fill="#5fd0fa" opacity="0.67"/><rect x="167.66" y="39.79" width="0.34" height="1.4" fill="#5fd0fa" opacity="0.63"/>
<rect x="170.00" y="39.83" width="1.01" height="1.6" fill="#f6f48e" opacity="0.75"/><rect x="171.50" y="40.27" width="1.15" height="1.0" fill="#f6f48e" opacity="0.61"/><rect x="173.04" y="39.79" width="0.32" height="1.4" fill="#f6f48e" opacity="0.71"/><rect x="175.51" y="39.97" width="1.03" height="1.6" fill="#f6f48e" opacity="0.63"/>
<rect x="150.50" y="43.54" width="1.10" height="1.2" fill="#5fd0fa" opacity="0.73"/><rect x="151.93" y="43.52" width="1.37" height="1.6" fill="#5fd0fa" opacity="0.67"/><rect x="153.54" y="43.58" width="1.43" height="1.4" fill="#5fd0fa" opacity="0.57"/><rect x="155.26" y="43.86" width="1.18" height="1.0" fill="#5fd0fa" opacity="0.63"/><rect x="156.72" y="43.49" width="1.42" height="1.4" fill="#5fd0fa" opacity="0.64"/><rect x="158.38" y="43.43" width="1.01" height="1.4" fill="#5fd0fa" opacity="0.65"/><rect x="159.65" y="43.66" width="1.41" height="1.2" fill="#5fd0fa" opacity="0.65"/><rect x="161.33" y="43.73" width="0.50" height="1.0" fill="#5fd0fa" opacity="0.79"/><rect x="164.27" y="43.23" width="0.73" height="1.6" fill="#5fd0fa" opacity="0.58"/>
<rect x="166.00" y="43.67" width="1.19" height="1.2" fill="#48dc96" opacity="0.63"/><rect x="167.52" y="43.56" width="1.24" height="1.0" fill="#48dc96" opacity="0.61"/><rect x="168.98" y="43.61" width="1.34" height="1.2" fill="#48dc96" opacity="0.78"/><rect x="170.82" y="43.20" width="1.00" height="2.0" fill="#48dc96" opacity="0.72"/><rect x="172.16" y="43.35" width="1.31" height="2.0" fill="#48dc96" opacity="0.73"/><rect x="173.90" y="43.85" width="1.10" height="1.0" fill="#48dc96" opacity="0.64"/>
<rect x="150.50" y="47.16" width="1.48" height="1.2" fill="#5fd0fa" opacity="0.71"/><rect x="152.30" y="47.17" width="1.28" height="1.4" fill="#5fd0fa" opacity="0.65"/><rect x="153.97" y="47.24" width="1.25" height="1.2" fill="#5fd0fa" opacity="0.73"/><rect x="155.69" y="47.60" width="1.37" height="1.0" fill="#5fd0fa" opacity="0.76"/><rect x="157.52" y="47.10" width="1.16" height="1.6" fill="#5fd0fa" opacity="0.72"/><rect x="158.84" y="47.25" width="0.84" height="1.6" fill="#5fd0fa" opacity="0.57"/><rect x="161.94" y="47.15" width="1.20" height="1.4" fill="#5fd0fa" opacity="0.72"/><rect x="163.35" y="47.44" width="1.43" height="1.2" fill="#5fd0fa" opacity="0.76"/><rect x="165.13" y="47.35" width="1.21" height="1.2" fill="#5fd0fa" opacity="0.76"/><rect x="166.77" y="47.15" width="1.06" height="1.6" fill="#5fd0fa" opacity="0.63"/><rect x="168.21" y="47.13" width="1.49" height="1.6" fill="#5fd0fa" opacity="0.79"/><rect x="170.19" y="47.17" width="1.07" height="1.4" fill="#5fd0fa" opacity="0.71"/><rect x="171.54" y="47.12" width="0.46" height="1.2" fill="#5fd0fa" opacity="0.73"/>
<rect x="176.00" y="47.36" width="1.37" height="1.0" fill="#f6f48e" opacity="0.78"/><rect x="177.81" y="47.25" width="1.43" height="1.2" fill="#f6f48e" opacity="0.63"/><rect x="179.67" y="47.09" width="1.42" height="1.4" fill="#f6f48e" opacity="0.73"/><rect x="183.29" y="47.32" width="1.34" height="1.2" fill="#f6f48e" opacity="0.75"/><rect x="184.83" y="47.42" width="1.09" height="1.0" fill="#f6f48e" opacity="0.78"/><rect x="186.37" y="47.23" width="1.22" height="1.2" fill="#f6f48e" opacity="0.56"/><rect x="187.94" y="47.01" width="1.07" height="1.6" fill="#f6f48e" opacity="0.61"/><rect x="189.33" y="47.22" width="1.18" height="1.4" fill="#f6f48e" opacity="0.60"/><rect x="190.66" y="47.20" width="1.34" height="1.0" fill="#f6f48e" opacity="0.64"/>
<rect x="147.50" y="51.07" width="1.20" height="1.0" fill="#6a6a80" opacity="0.57"/>
<rect x="150.50" y="57.70" width="1.33" height="2.0" fill="#5fd0fa" opacity="0.61"/><rect x="152.08" y="58.03" width="1.12" height="1.6" fill="#5fd0fa" opacity="0.79"/><rect x="153.37" y="58.22" width="1.43" height="1.2" fill="#5fd0fa" opacity="0.72"/><rect x="155.04" y="57.72" width="1.01" height="2.0" fill="#5fd0fa" opacity="0.68"/><rect x="156.21" y="57.90" width="1.11" height="1.4" fill="#5fd0fa" opacity="0.69"/><rect x="157.75" y="57.96" width="1.40" height="1.6" fill="#5fd0fa" opacity="0.75"/><rect x="159.59" y="58.47" width="1.11" height="1.0" fill="#5fd0fa" opacity="0.68"/>
<rect x="137.50" y="62.03" width="1.31" height="1.0" fill="#f6f48e" opacity="0.61"/><rect x="139.10" y="61.92" width="1.18" height="1.4" fill="#f6f48e" opacity="0.65"/><rect x="140.66" y="61.63" width="1.18" height="1.4" fill="#f6f48e" opacity="0.72"/><rect x="142.19" y="62.00" width="1.13" height="1.2" fill="#f6f48e" opacity="0.61"/><rect x="143.73" y="61.77" width="1.27" height="1.2" fill="#f6f48e" opacity="0.59"/><rect x="145.21" y="61.51" width="1.18" height="1.6" fill="#f6f48e" opacity="0.66"/><rect x="146.55" y="61.64" width="1.05" height="2.0" fill="#f6f48e" opacity="0.74"/><rect x="147.75" y="62.10" width="0.84" height="1.0" fill="#f6f48e" opacity="0.59"/><rect x="150.74" y="61.81" width="1.11" height="1.6" fill="#f6f48e" opacity="0.77"/><rect x="152.28" y="61.88" width="1.03" height="1.6" fill="#f6f48e" opacity="0.64"/><rect x="153.53" y="61.86" width="1.18" height="1.0" fill="#f6f48e" opacity="0.71"/><rect x="154.99" y="61.95" width="1.32" height="1.2" fill="#f6f48e" opacity="0.64"/><rect x="156.62" y="61.70" width="1.36" height="1.6" fill="#f6f48e" opacity="0.70"/><rect x="158.16" y="61.67" width="1.42" height="1.6" fill="#f6f48e" opacity="0.67"/><rect x="160.03" y="61.74" width="1.25" height="1.6" fill="#f6f48e" opacity="0.70"/><rect x="161.61" y="61.68" width="0.79" height="1.6" fill="#f6f48e" opacity="0.70"/><rect x="165.30" y="61.90" width="1.23" height="1.4" fill="#f6f48e" opacity="0.64"/><rect x="166.94" y="61.52" width="1.49" height="1.6" fill="#f6f48e" opacity="0.79"/><rect x="168.85" y="61.89" width="0.82" height="1.0" fill="#f6f48e" opacity="0.76"/><rect x="172.57" y="61.40" width="1.40" height="2.0" fill="#f6f48e" opacity="0.62"/><rect x="174.19" y="61.70" width="1.02" height="1.4" fill="#f6f48e" opacity="0.75"/><rect x="175.51" y="61.58" width="1.27" height="1.6" fill="#f6f48e" opacity="0.63"/><rect x="177.16" y="61.48" width="1.04" height="2.0" fill="#f6f48e" opacity="0.74"/><rect x="178.65" y="61.84" width="1.04" height="1.6" fill="#f6f48e" opacity="0.74"/><rect x="180.03" y="62.02" width="1.45" height="1.2" fill="#f6f48e" opacity="0.60"/><rect x="181.75" y="62.03" width="1.29" height="1.2" fill="#f6f48e" opacity="0.59"/><rect x="185.12" y="61.53" width="1.31" height="1.6" fill="#f6f48e" opacity="0.80"/><rect x="186.65" y="61.92" width="1.31" height="1.2" fill="#f6f48e" opacity="0.80"/><rect x="188.25" y="61.94" width="1.41" height="1.4" fill="#f6f48e" opacity="0.79"/><rect x="190.03" y="61.77" width="1.10" height="1.2" fill="#f6f48e" opacity="0.59"/><rect x="191.53" y="61.81" width="1.23" height="1.2" fill="#f6f48e" opacity="0.62"/><rect x="193.04" y="61.68" width="1.31" height="1.4" fill="#f6f48e" opacity="0.80"/><rect x="194.74" y="61.95" width="1.02" height="1.4" fill="#f6f48e" opacity="0.74"/><rect x="197.37" y="61.46" width="1.19" height="2.0" fill="#f6f48e" opacity="0.67"/><rect x="198.88" y="61.81" width="1.47" height="1.4" fill="#f6f48e" opacity="0.66"/><rect x="200.68" y="62.15" width="1.06" height="1.0" fill="#f6f48e" opacity="0.63"/><rect x="202.18" y="61.59" width="0.58" height="1.6" fill="#f6f48e" opacity="0.67"/><rect x="204.88" y="61.77" width="1.32" height="1.4" fill="#f6f48e" opacity="0.63"/><rect x="206.51" y="61.86" width="1.48" height="1.4" fill="#f6f48e" opacity="0.56"/><rect x="208.35" y="61.65" width="1.01" height="1.4" fill="#f6f48e" opacity="0.77"/><rect x="212.00" y="61.34" width="1.41" height="2.0" fill="#f6f48e" opacity="0.72"/><rect x="213.71" y="61.61" width="1.10" height="1.4" fill="#f6f48e" opacity="0.57"/><rect x="215.18" y="62.07" width="1.35" height="1.0" fill="#f6f48e" opacity="0.60"/><rect x="216.70" y="61.43" width="1.09" height="2.0" fill="#f6f48e" opacity="0.72"/><rect x="221.03" y="61.67" width="1.50" height="1.6" fill="#f6f48e" opacity="0.62"/><rect x="222.86" y="61.83" width="1.06" height="1.0" fill="#f6f48e" opacity="0.67"/><rect x="224.21" y="61.91" width="1.33" height="1.2" fill="#f6f48e" opacity="0.70"/><rect x="225.86" y="61.46" width="1.42" height="2.0" fill="#f6f48e" opacity="0.74"/><rect x="227.45" y="61.61" width="1.08" height="2.0" fill="#f6f48e" opacity="0.78"/><rect x="228.92" y="61.81" width="1.48" height="1.6" fill="#f6f48e" opacity="0.59"/><rect x="230.72" y="61.98" width="1.01" height="1.4" fill="#f6f48e" opacity="0.77"/><rect x="231.88" y="61.52" width="0.93" height="2.0" fill="#f6f48e" opacity="0.79"/><rect x="234.46" y="62.03" width="1.28" height="1.0" fill="#f6f48e" opacity="0.59"/><rect x="235.92" y="61.74" width="1.26" height="1.4" fill="#f6f48e" opacity="0.62"/><rect x="237.53" y="61.94" width="1.23" height="1.2" fill="#f6f48e" opacity="0.60"/><rect x="238.95" y="62.12" width="1.07" height="1.0" fill="#f6f48e" opacity="0.68"/><rect x="240.22" y="61.86" width="1.28" height="1.2" fill="#f6f48e" opacity="0.71"/><rect x="241.95" y="61.83" width="1.05" height="1.6" fill="#f6f48e" opacity="0.61"/>
<rect x="137.50" y="65.31" width="1.19" height="1.4" fill="#f6f48e" opacity="0.57"/><rect x="138.88" y="65.06" width="1.15" height="2.0" fill="#f6f48e" opacity="0.76"/><rect x="140.19" y="65.39" width="1.21" height="1.0" fill="#f6f48e" opacity="0.69"/><rect x="141.78" y="65.08" width="1.21" height="1.6" fill="#f6f48e" opacity="0.80"/><rect x="143.34" y="65.17" width="1.07" height="2.0" fill="#f6f48e" opacity="0.58"/><rect x="144.78" y="64.90" width="1.13" height="2.0" fill="#f6f48e" opacity="0.65"/><rect x="146.21" y="65.36" width="0.93" height="1.4" fill="#f6f48e" opacity="0.64"/><rect x="149.10" y="65.22" width="1.08" height="1.6" fill="#f6f48e" opacity="0.66"/><rect x="150.41" y="65.11" width="1.05" height="1.4" fill="#f6f48e" opacity="0.65"/><rect x="151.94" y="64.99" width="1.26" height="2.0" fill="#f6f48e" opacity="0.56"/><rect x="153.50" y="65.58" width="1.48" height="1.0" fill="#f6f48e" opacity="0.65"/><rect x="155.22" y="65.44" width="1.48" height="1.4" fill="#f6f48e" opacity="0.61"/><rect x="158.47" y="65.12" width="1.06" height="1.4" fill="#f6f48e" opacity="0.58"/><rect x="159.76" y="65.26" width="1.14" height="1.6" fill="#f6f48e" opacity="0.65"/><rect x="161.08" y="65.33" width="1.29" height="1.0" fill="#f6f48e" opacity="0.80"/><rect x="162.81" y="65.16" width="0.31" height="1.4" fill="#f6f48e" opacity="0.60"/><rect x="165.04" y="65.25" width="1.25" height="1.6" fill="#f6f48e" opacity="0.69"/><rect x="166.76" y="65.55" width="1.32" height="1.0" fill="#f6f48e" opacity="0.72"/><rect x="168.31" y="65.17" width="1.27" height="1.6" fill="#f6f48e" opacity="0.72"/><rect x="170.07" y="65.37" width="1.46" height="1.0" fill="#f6f48e" opacity="0.58"/><rect x="171.92" y="65.27" width="1.07" height="1.6" fill="#f6f48e" opacity="0.75"/><rect x="173.30" y="65.63" width="1.20" height="1.0" fill="#f6f48e" opacity="0.79"/>
<rect x="150.50" y="68.92" width="1.35" height="1.6" fill="#5fd0fa" opacity="0.79"/><rect x="152.20" y="69.04" width="1.46" height="1.2" fill="#5fd0fa" opacity="0.64"/><rect x="153.86" y="69.35" width="1.47" height="1.2" fill="#5fd0fa" opacity="0.67"/><rect x="155.49" y="68.88" width="1.22" height="1.6" fill="#5fd0fa" opacity="0.73"/><rect x="157.03" y="69.00" width="1.22" height="1.6" fill="#5fd0fa" opacity="0.68"/><rect x="158.59" y="68.73" width="1.32" height="2.0" fill="#5fd0fa" opacity="0.56"/><rect x="162.38" y="68.98" width="1.40" height="1.6" fill="#5fd0fa" opacity="0.70"/><rect x="164.10" y="69.19" width="1.39" height="1.2" fill="#5fd0fa" opacity="0.80"/>
<rect x="167.00" y="69.03" width="1.13" height="1.6" fill="#f6f48e" opacity="0.62"/><rect x="168.30" y="68.90" width="1.41" height="1.6" fill="#f6f48e" opacity="0.61"/><rect x="170.18" y="69.39" width="1.03" height="1.2" fill="#f6f48e" opacity="0.78"/><rect x="171.53" y="69.07" width="0.58" height="1.2" fill="#f6f48e" opacity="0.71"/><rect x="174.35" y="69.13" width="0.65" height="1.4" fill="#f6f48e" opacity="0.69"/>
<rect x="150.50" y="72.54" width="1.38" height="1.4" fill="#5fd0fa" opacity="0.75"/><rect x="152.11" y="72.50" width="1.10" height="2.0" fill="#5fd0fa" opacity="0.64"/><rect x="153.42" y="72.96" width="1.10" height="1.2" fill="#5fd0fa" opacity="0.78"/><rect x="154.90" y="72.74" width="1.18" height="1.4" fill="#5fd0fa" opacity="0.76"/><rect x="156.58" y="72.51" width="1.06" height="1.4" fill="#5fd0fa" opacity="0.69"/><rect x="157.87" y="72.72" width="1.15" height="1.4" fill="#5fd0fa" opacity="0.62"/><rect x="159.19" y="72.88" width="1.01" height="1.4" fill="#5fd0fa" opacity="0.60"/><rect x="160.50" y="72.54" width="1.41" height="2.0" fill="#5fd0fa" opacity="0.71"/><rect x="164.66" y="72.51" width="1.33" height="2.0" fill="#5fd0fa" opacity="0.62"/><rect x="166.16" y="72.76" width="1.47" height="1.4" fill="#5fd0fa" opacity="0.69"/>
<rect x="170.00" y="72.31" width="1.11" height="2.0" fill="#f6f48e" opacity="0.73"/><rect x="171.57" y="72.24" width="1.04" height="2.0" fill="#f6f48e" opacity="0.79"/><rect x="172.99" y="72.74" width="1.04" height="1.0" fill="#f6f48e" opacity="0.70"/><rect x="174.21" y="72.64" width="1.49" height="1.4" fill="#f6f48e" opacity="0.59"/><rect x="176.19" y="72.61" width="0.81" height="1.2" fill="#f6f48e" opacity="0.70"/>
<rect x="150.50" y="76.02" width="1.39" height="2.0" fill="#5fd0fa" opacity="0.66"/><rect x="152.28" y="76.35" width="1.04" height="1.4" fill="#5fd0fa" opacity="0.78"/><rect x="153.78" y="76.39" width="1.05" height="1.2" fill="#5fd0fa" opacity="0.58"/><rect x="155.15" y="75.84" width="1.28" height="2.0" fill="#5fd0fa" opacity="0.78"/><rect x="156.67" y="76.48" width="1.11" height="1.4" fill="#5fd0fa" opacity="0.79"/><rect x="158.26" y="76.37" width="1.46" height="1.6" fill="#5fd0fa" opacity="0.56"/><rect x="160.05" y="76.05" width="1.15" height="2.0" fill="#5fd0fa" opacity="0.71"/><rect x="162.83" y="76.34" width="1.48" height="1.0" fill="#5fd0fa" opacity="0.63"/><rect x="164.56" y="76.01" width="0.44" height="1.6" fill="#5fd0fa" opacity="0.76"/>
<rect x="166.00" y="76.30" width="1.38" height="1.0" fill="#48dc96" opacity="0.58"/><rect x="167.81" y="76.36" width="1.49" height="1.2" fill="#48dc96" opacity="0.64"/><rect x="169.57" y="76.30" width="1.01" height="1.2" fill="#48dc96" opacity="0.70"/><rect x="170.91" y="76.28" width="1.17" height="1.4" fill="#48dc96" opacity="0.62"/><rect x="172.53" y="76.28" width="1.09" height="1.2" fill="#48dc96" opacity="0.67"/><rect x="173.85" y="76.30" width="1.15" height="1.2" fill="#48dc96" opacity="0.72"/>
<rect x="150.50" y="80.02" width="1.44" height="1.2" fill="#5fd0fa" opacity="0.58"/><rect x="152.27" y="80.17" width="1.37" height="1.2" fill="#5fd0fa" opacity="0.75"/><rect x="153.98" y="79.60" width="1.04" height="2.0" fill="#5fd0fa" opacity="0.61"/><rect x="155.31" y="80.07" width="0.48" height="1.4" fill="#5fd0fa" opacity="0.58"/><rect x="158.55" y="80.04" width="1.21" height="1.2" fill="#5fd0fa" opacity="0.75"/><rect x="160.04" y="79.88" width="1.14" height="2.0" fill="#5fd0fa" opacity="0.58"/><rect x="161.67" y="80.20" width="1.46" height="1.0" fill="#5fd0fa" opacity="0.65"/><rect x="163.30" y="79.93" width="1.46" height="1.2" fill="#5fd0fa" opacity="0.60"/><rect x="165.08" y="79.94" width="1.11" height="1.4" fill="#5fd0fa" opacity="0.78"/><rect x="166.40" y="80.08" width="1.36" height="1.0" fill="#5fd0fa" opacity="0.59"/><rect x="168.14" y="79.85" width="1.44" height="1.6" fill="#5fd0fa" opacity="0.73"/><rect x="170.05" y="80.39" width="1.07" height="1.0" fill="#5fd0fa" opacity="0.73"/><rect x="171.51" y="79.87" width="0.49" height="1.4" fill="#5fd0fa" opacity="0.59"/>
<rect x="176.00" y="79.60" width="1.38" height="2.0" fill="#f6f48e" opacity="0.58"/><rect x="177.76" y="80.19" width="1.01" height="1.4" fill="#f6f48e" opacity="0.78"/><rect x="179.16" y="80.06" width="1.09" height="1.4" fill="#f6f48e" opacity="0.59"/><rect x="180.57" y="79.68" width="1.45" height="2.0" fill="#f6f48e" opacity="0.70"/><rect x="182.46" y="79.96" width="1.23" height="1.2" fill="#f6f48e" opacity="0.67"/><rect x="186.27" y="79.87" width="1.27" height="1.4" fill="#f6f48e" opacity="0.60"/><rect x="187.95" y="80.01" width="1.11" height="1.0" fill="#f6f48e" opacity="0.66"/><rect x="189.54" y="80.19" width="1.31" height="1.0" fill="#f6f48e" opacity="0.60"/><rect x="191.00" y="80.13" width="1.00" height="1.0" fill="#f6f48e" opacity="0.76"/>
<rect x="147.50" y="83.74" width="1.37" height="1.2" fill="#6a6a80" opacity="0.58"/>
<rect x="150.50" y="90.18" width="1.23" height="1.4" fill="#5fd0fa" opacity="0.68"/><rect x="152.12" y="90.09" width="1.31" height="1.2" fill="#5fd0fa" opacity="0.69"/><rect x="153.90" y="89.89" width="1.38" height="1.4" fill="#5fd0fa" opacity="0.70"/><rect x="155.49" y="90.06" width="1.47" height="1.4" fill="#5fd0fa" opacity="0.71"/><rect x="157.11" y="90.20" width="1.24" height="1.0" fill="#5fd0fa" opacity="0.78"/><rect x="158.68" y="90.27" width="1.19" height="1.0" fill="#5fd0fa" opacity="0.66"/><rect x="160.20" y="89.68" width="0.50" height="2.0" fill="#5fd0fa" opacity="0.58"/>
<rect x="137.50" y="93.72" width="1.49" height="1.4" fill="#f6f48e" opacity="0.57"/><rect x="139.23" y="93.53" width="1.03" height="2.0" fill="#f6f48e" opacity="0.75"/><rect x="140.50" y="93.24" width="1.45" height="2.0" fill="#f6f48e" opacity="0.64"/><rect x="142.12" y="93.46" width="1.04" height="1.6" fill="#f6f48e" opacity="0.64"/><rect x="143.54" y="93.86" width="1.25" height="1.2" fill="#f6f48e" opacity="0.73"/><rect x="145.10" y="93.87" width="1.15" height="1.2" fill="#f6f48e" opacity="0.75"/><rect x="148.99" y="93.52" width="1.09" height="1.6" fill="#f6f48e" opacity="0.62"/><rect x="150.55" y="93.46" width="1.01" height="2.0" fill="#f6f48e" opacity="0.67"/><rect x="151.93" y="93.77" width="1.34" height="1.6" fill="#f6f48e" opacity="0.71"/><rect x="153.44" y="93.80" width="1.33" height="1.0" fill="#f6f48e" opacity="0.63"/><rect x="155.06" y="93.48" width="1.13" height="2.0" fill="#f6f48e" opacity="0.74"/><rect x="156.69" y="93.90" width="1.31" height="1.2" fill="#f6f48e" opacity="0.72"/><rect x="158.30" y="93.71" width="0.90" height="1.6" fill="#f6f48e" opacity="0.77"/><rect x="162.11" y="93.68" width="1.25" height="1.6" fill="#f6f48e" opacity="0.57"/><rect x="163.82" y="93.69" width="1.25" height="1.2" fill="#f6f48e" opacity="0.71"/><rect x="165.26" y="93.53" width="1.08" height="1.6" fill="#f6f48e" opacity="0.63"/><rect x="166.55" y="93.83" width="1.32" height="1.0" fill="#f6f48e" opacity="0.78"/><rect x="168.34" y="93.45" width="1.15" height="2.0" fill="#f6f48e" opacity="0.79"/><rect x="169.91" y="93.59" width="0.95" height="1.4" fill="#f6f48e" opacity="0.80"/><rect x="172.51" y="93.30" width="1.03" height="2.0" fill="#f6f48e" opacity="0.61"/><rect x="173.89" y="93.66" width="1.12" height="1.4" fill="#f6f48e" opacity="0.64"/><rect x="175.49" y="93.37" width="1.15" height="2.0" fill="#f6f48e" opacity="0.66"/><rect x="176.87" y="93.75" width="1.24" height="1.0" fill="#f6f48e" opacity="0.66"/><rect x="178.50" y="93.52" width="1.38" height="2.0" fill="#f6f48e" opacity="0.78"/><rect x="180.21" y="93.42" width="1.47" height="2.0" fill="#f6f48e" opacity="0.80"/><rect x="183.64" y="93.67" width="1.03" height="1.2" fill="#f6f48e" opacity="0.79"/><rect x="185.09" y="93.61" width="1.29" height="1.4" fill="#f6f48e" opacity="0.75"/><rect x="186.55" y="93.87" width="1.03" height="1.0" fill="#f6f48e" opacity="0.59"/><rect x="187.90" y="93.92" width="1.48" height="1.0" fill="#f6f48e" opacity="0.56"/><rect x="189.69" y="94.00" width="1.31" height="1.2" fill="#f6f48e" opacity="0.68"/><rect x="191.42" y="93.87" width="1.12" height="1.2" fill="#f6f48e" opacity="0.71"/><rect x="192.71" y="93.70" width="0.83" height="1.2" fill="#f6f48e" opacity="0.70"/><rect x="195.61" y="93.24" width="1.37" height="2.0" fill="#f6f48e" opacity="0.79"/><rect x="197.42" y="93.55" width="1.24" height="2.0" fill="#f6f48e" opacity="0.78"/><rect x="199.04" y="93.79" width="1.17" height="1.0" fill="#f6f48e" opacity="0.77"/><rect x="200.54" y="93.75" width="1.21" height="1.6" fill="#f6f48e" opacity="0.61"/><rect x="201.90" y="93.68" width="1.05" height="1.4" fill="#f6f48e" opacity="0.65"/><rect x="203.25" y="93.58" width="1.23" height="1.4" fill="#f6f48e" opacity="0.57"/><rect x="204.93" y="93.88" width="0.36" height="1.0" fill="#f6f48e" opacity="0.67"/><rect x="207.48" y="93.75" width="1.45" height="1.6" fill="#f6f48e" opacity="0.58"/><rect x="209.16" y="93.58" width="1.11" height="2.0" fill="#f6f48e" opacity="0.72"/><rect x="210.65" y="93.59" width="1.22" height="1.4" fill="#f6f48e" opacity="0.74"/><rect x="212.21" y="93.73" width="1.49" height="1.4" fill="#f6f48e" opacity="0.65"/><rect x="215.88" y="93.49" width="1.05" height="1.6" fill="#f6f48e" opacity="0.66"/><rect x="217.42" y="93.42" width="1.10" height="1.6" fill="#f6f48e" opacity="0.70"/><rect x="218.96" y="93.43" width="1.42" height="1.6" fill="#f6f48e" opacity="0.79"/><rect x="220.78" y="93.73" width="1.17" height="1.4" fill="#f6f48e" opacity="0.62"/><rect x="222.34" y="93.26" width="0.38" height="2.0" fill="#f6f48e" opacity="0.57"/><rect x="225.10" y="93.81" width="1.25" height="1.0" fill="#f6f48e" opacity="0.70"/><rect x="226.68" y="93.97" width="1.25" height="1.2" fill="#f6f48e" opacity="0.75"/><rect x="228.26" y="93.67" width="1.24" height="1.6" fill="#f6f48e" opacity="0.58"/><rect x="229.67" y="93.60" width="1.23" height="2.0" fill="#f6f48e" opacity="0.70"/><rect x="231.38" y="93.73" width="1.18" height="1.0" fill="#f6f48e" opacity="0.63"/><rect x="232.95" y="93.75" width="1.35" height="1.2" fill="#f6f48e" opacity="0.63"/><rect x="234.57" y="93.92" width="0.81" height="1.0" fill="#f6f48e" opacity="0.66"/><rect x="238.07" y="93.30" width="1.42" height="2.0" fill="#f6f48e" opacity="0.60"/><rect x="239.67" y="94.00" width="1.04" height="1.0" fill="#f6f48e" opacity="0.62"/><rect x="241.04" y="93.97" width="1.35" height="1.0" fill="#f6f48e" opacity="0.63"/><rect x="242.65" y="93.78" width="0.35" height="1.4" fill="#f6f48e" opacity="0.64"/>
<rect x="137.50" y="97.27" width="1.16" height="1.6" fill="#f6f48e" opacity="0.75"/><rect x="138.91" y="97.09" width="1.25" height="1.4" fill="#f6f48e" opacity="0.61"/><rect x="140.52" y="97.32" width="1.08" height="1.4" fill="#f6f48e" opacity="0.77"/><rect x="141.81" y="96.97" width="1.09" height="2.0" fill="#f6f48e" opacity="0.60"/><rect x="143.18" y="97.41" width="1.35" height="1.2" fill="#f6f48e" opacity="0.64"/><rect x="146.98" y="97.54" width="1.25" height="1.0" fill="#f6f48e" opacity="0.74"/><rect x="148.65" y="96.71" width="1.34" height="2.0" fill="#f6f48e" opacity="0.64"/><rect x="153.16" y="96.93" width="1.27" height="1.6" fill="#f6f48e" opacity="0.58"/><rect x="154.58" y="97.32" width="1.35" height="1.2" fill="#f6f48e" opacity="0.57"/><rect x="156.13" y="97.39" width="1.34" height="1.0" fill="#f6f48e" opacity="0.63"/><rect x="157.82" y="97.00" width="1.18" height="1.4" fill="#f6f48e" opacity="0.78"/><rect x="159.25" y="97.12" width="1.01" height="1.4" fill="#f6f48e" opacity="0.70"/><rect x="162.25" y="96.78" width="1.23" height="2.0" fill="#f6f48e" opacity="0.69"/><rect x="163.95" y="97.18" width="1.44" height="1.6" fill="#f6f48e" opacity="0.68"/><rect x="165.68" y="96.81" width="1.20" height="2.0" fill="#f6f48e" opacity="0.67"/><rect x="167.22" y="97.21" width="1.50" height="1.2" fill="#f6f48e" opacity="0.63"/><rect x="169.01" y="97.45" width="1.32" height="1.0" fill="#f6f48e" opacity="0.63"/><rect x="170.55" y="96.97" width="1.43" height="2.0" fill="#f6f48e" opacity="0.73"/><rect x="172.40" y="97.10" width="1.23" height="1.6" fill="#f6f48e" opacity="0.61"/><rect x="173.98" y="97.13" width="0.52" height="1.2" fill="#f6f48e" opacity="0.62"/>
<rect x="150.50" y="101.01" width="1.15" height="1.4" fill="#5fd0fa" opacity="0.80"/><rect x="151.83" y="101.35" width="1.50" height="1.0" fill="#5fd0fa" opacity="0.75"/><rect x="153.73" y="100.92" width="1.38" height="1.6" fill="#5fd0fa" opacity="0.79"/><rect x="155.41" y="100.52" width="1.38" height="2.0" fill="#5fd0fa" opacity="0.73"/><rect x="156.96" y="101.17" width="1.17" height="1.2" fill="#5fd0fa" opacity="0.61"/><rect x="160.45" y="100.51" width="1.29" height="2.0" fill="#5fd0fa" opacity="0.61"/><rect x="162.12" y="101.10" width="1.11" height="1.0" fill="#5fd0fa" opacity="0.63"/><rect x="163.44" y="100.54" width="1.45" height="2.0" fill="#5fd0fa" opacity="0.71"/><rect x="165.12" y="101.20" width="0.88" height="1.2" fill="#5fd0fa" opacity="0.57"/>
<rect x="167.00" y="101.30" width="1.10" height="1.0" fill="#f6f48e" opacity="0.77"/><rect x="168.48" y="101.16" width="1.49" height="1.4" fill="#f6f48e" opacity="0.74"/><rect x="170.23" y="101.37" width="1.03" height="1.0" fill="#f6f48e" opacity="0.57"/><rect x="173.34" y="101.07" width="1.13" height="1.2" fill="#f6f48e" opacity="0.72"/><rect x="174.63" y="101.17" width="0.37" height="1.4" fill="#f6f48e" opacity="0.72"/>
<rect x="150.50" y="104.99" width="1.14" height="1.0" fill="#5fd0fa" opacity="0.72"/><rect x="152.01" y="104.60" width="1.19" height="1.4" fill="#5fd0fa" opacity="0.57"/><rect x="153.53" y="104.20" width="1.19" height="2.0" fill="#5fd0fa" opacity="0.59"/><rect x="155.00" y="104.23" width="0.64" height="2.0" fill="#5fd0fa" opacity="0.60"/><rect x="158.51" y="104.56" width="1.25" height="1.6" fill="#5fd0fa" opacity="0.71"/><rect x="160.13" y="104.59" width="1.22" height="1.6" fill="#5fd0fa" opacity="0.58"/><rect x="161.80" y="104.65" width="1.02" height="1.2" fill="#5fd0fa" opacity="0.61"/><rect x="165.19" y="104.74" width="1.18" height="1.0" fill="#5fd0fa" opacity="0.58"/><rect x="166.62" y="104.70" width="1.31" height="1.0" fill="#5fd0fa" opacity="0.72"/>
<rect x="170.00" y="104.84" width="1.17" height="1.0" fill="#f6f48e" opacity="0.62"/><rect x="171.38" y="104.38" width="1.23" height="1.6" fill="#f6f48e" opacity="0.71"/><rect x="172.82" y="104.42" width="1.08" height="2.0" fill="#f6f48e" opacity="0.66"/>
<rect x="150.50" y="108.02" width="1.00" height="1.4" fill="#5fd0fa" opacity="0.71"/><rect x="151.72" y="108.37" width="1.17" height="1.0" fill="#5fd0fa" opacity="0.75"/><rect x="153.34" y="108.38" width="1.03" height="1.4" fill="#5fd0fa" opacity="0.59"/><rect x="156.93" y="108.31" width="1.35" height="1.0" fill="#5fd0fa" opacity="0.63"/><rect x="158.52" y="108.48" width="1.50" height="1.0" fill="#5fd0fa" opacity="0.78"/><rect x="160.23" y="108.31" width="1.20" height="1.4" fill="#5fd0fa" opacity="0.59"/><rect x="161.92" y="108.24" width="1.37" height="1.4" fill="#5fd0fa" opacity="0.72"/><rect x="163.64" y="108.40" width="1.36" height="1.4" fill="#5fd0fa" opacity="0.76"/>
<rect x="166.00" y="107.74" width="1.20" height="2.0" fill="#48dc96" opacity="0.75"/><rect x="167.58" y="107.81" width="1.22" height="2.0" fill="#48dc96" opacity="0.64"/><rect x="169.16" y="108.17" width="1.10" height="1.6" fill="#48dc96" opacity="0.77"/><rect x="172.07" y="108.04" width="1.30" height="2.0" fill="#48dc96" opacity="0.61"/><rect x="173.72" y="108.25" width="1.17" height="1.0" fill="#48dc96" opacity="0.73"/>
<rect x="150.50" y="111.93" width="1.25" height="1.0" fill="#5fd0fa" opacity="0.73"/><rect x="151.98" y="111.94" width="1.24" height="1.6" fill="#5fd0fa" opacity="0.78"/><rect x="153.52" y="111.70" width="1.16" height="1.6" fill="#5fd0fa" opacity="0.73"/><rect x="155.11" y="111.46" width="1.27" height="2.0" fill="#5fd0fa" opacity="0.75"/><rect x="156.86" y="111.64" width="0.86" height="2.0" fill="#5fd0fa" opacity="0.72"/><rect x="160.49" y="112.09" width="1.10" height="1.4" fill="#5fd0fa" opacity="0.57"/><rect x="161.77" y="111.87" width="1.02" height="1.6" fill="#5fd0fa" opacity="0.62"/><rect x="163.03" y="112.08" width="1.23" height="1.4" fill="#5fd0fa" opacity="0.57"/><rect x="164.63" y="111.91" width="1.24" height="1.0" fill="#5fd0fa" opacity="0.60"/><rect x="166.04" y="111.84" width="1.27" height="1.2" fill="#5fd0fa" opacity="0.73"/><rect x="167.76" y="111.97" width="0.64" height="1.4" fill="#5fd0fa" opacity="0.73"/><rect x="170.73" y="111.79" width="1.27" height="2.0" fill="#5fd0fa" opacity="0.63"/>
<rect x="176.00" y="111.94" width="1.01" height="1.6" fill="#f6f48e" opacity="0.68"/><rect x="177.47" y="111.72" width="1.08" height="1.4" fill="#f6f48e" opacity="0.59"/><rect x="178.91" y="111.73" width="1.34" height="1.4" fill="#f6f48e" opacity="0.71"/><rect x="180.55" y="111.97" width="1.14" height="1.6" fill="#f6f48e" opacity="0.72"/><rect x="182.14" y="111.92" width="1.04" height="1.0" fill="#f6f48e" opacity="0.66"/><rect x="185.73" y="111.64" width="1.07" height="1.6" fill="#f6f48e" opacity="0.62"/><rect x="187.01" y="111.85" width="1.32" height="1.4" fill="#f6f48e" opacity="0.77"/><rect x="188.56" y="111.99" width="1.01" height="1.2" fill="#f6f48e" opacity="0.59"/><rect x="189.76" y="112.13" width="1.45" height="1.0" fill="#f6f48e" opacity="0.60"/><rect x="191.47" y="112.01" width="0.53" height="1.0" fill="#f6f48e" opacity="0.57"/>
<rect x="147.50" y="115.59" width="1.28" height="1.4" fill="#6a6a80" opacity="0.58"/>
<rect x="143.50" y="119.20" width="1.30" height="1.6" fill="#6a6a80" opacity="0.48"/>
<rect x="140.50" y="123.28" width="1.21" height="1.2" fill="#6a6a80" opacity="0.53"/>
<rect x="252" y="13.4" width="3" height="3" fill="none" stroke="#aaa" stroke-width="0.5" opacity="0.45"/>
<rect x="252" y="23.9" width="3" height="3" fill="none" stroke="#aaa" stroke-width="0.5" opacity="0.45"/>
<rect x="252" y="110.2" width="3" height="3" fill="none" stroke="#aaa" stroke-width="0.5" opacity="0.45"/>
<rect x="252" y="120.4" width="3" height="3" fill="none" stroke="#aaa" stroke-width="0.5" opacity="0.45"/>
<path d="M136.5 133 L141.5 135.8 L139.2 136.6 L140.3 139.5 L138.6 139.8 L137.6 137 L136.5 138.5 Z" fill="none" stroke="#fff" stroke-width="0.6"/>
<rect x="93.90" y="148.73" width="1.40" height="1.0" fill="#e8e8f0" opacity="0.58"/><rect x="95.74" y="148.25" width="1.26" height="2.0" fill="#e8e8f0" opacity="0.58"/><rect x="97.34" y="148.54" width="1.16" height="1.2" fill="#e8e8f0" opacity="0.58"/><rect x="98.74" y="148.49" width="1.34" height="1.2" fill="#e8e8f0" opacity="0.55"/><rect x="100.26" y="148.30" width="1.08" height="1.6" fill="#e8e8f0" opacity="0.67"/><rect x="101.62" y="148.39" width="0.68" height="1.2" fill="#e8e8f0" opacity="0.66"/>
<rect x="107.80" y="148.22" width="1.26" height="2.0" fill="#e8e8f0" opacity="0.70"/><rect x="109.36" y="148.56" width="1.12" height="1.4" fill="#e8e8f0" opacity="0.70"/><rect x="110.67" y="148.24" width="1.13" height="1.6" fill="#e8e8f0" opacity="0.72"/><rect x="112.23" y="148.35" width="1.17" height="1.4" fill="#e8e8f0" opacity="0.67"/>
<rect x="120.20" y="148.44" width="1.40" height="1.4" fill="#e8e8f0" opacity="0.67"/><rect x="121.99" y="148.26" width="1.49" height="2.0" fill="#e8e8f0" opacity="0.54"/><rect x="123.72" y="148.34" width="0.38" height="1.2" fill="#e8e8f0" opacity="0.54"/><rect x="127.02" y="148.32" width="1.47" height="1.4" fill="#e8e8f0" opacity="0.63"/><rect x="128.71" y="148.40" width="1.28" height="1.4" fill="#e8e8f0" opacity="0.53"/><rect x="130.29" y="148.12" width="1.04" height="2.0" fill="#e8e8f0" opacity="0.58"/><rect x="131.65" y="148.21" width="0.35" height="1.4" fill="#e8e8f0" opacity="0.62"/>
<rect x="138.40" y="147.95" width="1.46" height="2.0" fill="#e8e8f0" opacity="0.60"/><rect x="140.23" y="148.60" width="1.09" height="1.0" fill="#e8e8f0" opacity="0.57"/><rect x="141.69" y="148.43" width="1.15" height="1.4" fill="#e8e8f0" opacity="0.73"/><rect x="143.32" y="148.59" width="0.68" height="1.0" fill="#e8e8f0" opacity="0.70"/>
<rect x="149.90" y="148.20" width="1.21" height="2.0" fill="#e8e8f0" opacity="0.73"/><rect x="151.47" y="148.14" width="1.41" height="1.6" fill="#e8e8f0" opacity="0.56"/><rect x="153.05" y="148.25" width="1.08" height="1.4" fill="#e8e8f0" opacity="0.56"/><rect x="154.34" y="148.03" width="1.29" height="2.0" fill="#e8e8f0" opacity="0.72"/><rect x="156.05" y="148.05" width="0.95" height="2.0" fill="#e8e8f0" opacity="0.73"/>
<rect x="162.50" y="148.47" width="1.33" height="1.2" fill="#e8e8f0" opacity="0.64"/><rect x="164.05" y="148.22" width="1.23" height="1.4" fill="#e8e8f0" opacity="0.63"/><rect x="165.63" y="148.11" width="1.30" height="2.0" fill="#e8e8f0" opacity="0.66"/><rect x="167.08" y="148.35" width="1.49" height="1.6" fill="#e8e8f0" opacity="0.63"/><rect x="168.95" y="148.47" width="1.22" height="1.6" fill="#e8e8f0" opacity="0.57"/><rect x="170.36" y="148.66" width="0.97" height="1.2" fill="#e8e8f0" opacity="0.55"/><rect x="174.10" y="148.46" width="1.05" height="1.4" fill="#e8e8f0" opacity="0.69"/><rect x="175.56" y="148.11" width="1.22" height="1.6" fill="#e8e8f0" opacity="0.70"/><rect x="177.21" y="148.59" width="1.25" height="1.4" fill="#e8e8f0" opacity="0.68"/><rect x="178.67" y="148.04" width="1.26" height="2.0" fill="#e8e8f0" opacity="0.53"/><rect x="180.11" y="148.64" width="1.21" height="1.2" fill="#e8e8f0" opacity="0.53"/><rect x="181.58" y="148.51" width="1.18" height="1.4" fill="#e8e8f0" opacity="0.54"/>
<rect x="73.00" y="156.81" width="1.09" height="1.4" fill="#9a9aaa" opacity="0.51"/><rect x="74.32" y="157.08" width="1.36" height="1.0" fill="#9a9aaa" opacity="0.45"/><rect x="76.00" y="156.82" width="1.05" height="1.4" fill="#9a9aaa" opacity="0.47"/><rect x="77.23" y="157.17" width="1.05" height="1.4" fill="#9a9aaa" opacity="0.40"/><rect x="78.53" y="156.88" width="0.50" height="2.0" fill="#9a9aaa" opacity="0.41"/><rect x="80.83" y="157.16" width="1.06" height="1.4" fill="#9a9aaa" opacity="0.40"/><rect x="82.24" y="157.36" width="1.16" height="1.0" fill="#9a9aaa" opacity="0.53"/><rect x="83.73" y="157.17" width="1.03" height="1.4" fill="#9a9aaa" opacity="0.52"/><rect x="85.05" y="156.73" width="1.04" height="1.6" fill="#9a9aaa" opacity="0.43"/><rect x="86.49" y="157.10" width="1.17" height="1.2" fill="#9a9aaa" opacity="0.51"/><rect x="87.92" y="156.96" width="1.14" height="1.4" fill="#9a9aaa" opacity="0.48"/><rect x="89.31" y="157.13" width="1.01" height="1.0" fill="#9a9aaa" opacity="0.47"/><rect x="90.60" y="157.00" width="0.47" height="1.0" fill="#9a9aaa" opacity="0.51"/><rect x="92.93" y="157.14" width="1.30" height="1.0" fill="#9a9aaa" opacity="0.46"/><rect x="94.56" y="157.16" width="1.01" height="1.0" fill="#9a9aaa" opacity="0.52"/>
<rect x="101.90" y="157.02" width="1.13" height="1.6" fill="#9a9aaa" opacity="0.52"/><rect x="103.50" y="156.98" width="1.36" height="1.4" fill="#9a9aaa" opacity="0.47"/><rect x="105.21" y="157.33" width="1.26" height="1.0" fill="#9a9aaa" opacity="0.52"/><rect x="106.81" y="157.24" width="1.28" height="1.0" fill="#9a9aaa" opacity="0.41"/><rect x="108.25" y="156.61" width="1.29" height="2.0" fill="#9a9aaa" opacity="0.53"/>
<rect x="115.80" y="156.70" width="1.41" height="1.6" fill="#9a9aaa" opacity="0.42"/><rect x="117.62" y="157.18" width="1.44" height="1.4" fill="#9a9aaa" opacity="0.45"/><rect x="119.37" y="156.87" width="1.47" height="2.0" fill="#9a9aaa" opacity="0.47"/><rect x="120.99" y="156.87" width="1.24" height="1.4" fill="#9a9aaa" opacity="0.48"/><rect x="122.52" y="156.75" width="1.23" height="1.6" fill="#9a9aaa" opacity="0.48"/>
<rect x="130.40" y="156.67" width="1.26" height="2.0" fill="#9a9aaa" opacity="0.48"/><rect x="132.14" y="156.59" width="1.47" height="2.0" fill="#9a9aaa" opacity="0.43"/><rect x="133.91" y="156.78" width="1.32" height="2.0" fill="#9a9aaa" opacity="0.49"/><rect x="135.49" y="156.94" width="1.33" height="1.2" fill="#9a9aaa" opacity="0.42"/><rect x="139.62" y="156.95" width="1.12" height="1.2" fill="#9a9aaa" opacity="0.40"/><rect x="141.20" y="157.09" width="1.27" height="1.6" fill="#9a9aaa" opacity="0.55"/><rect x="145.21" y="156.81" width="1.38" height="2.0" fill="#9a9aaa" opacity="0.54"/><rect x="146.95" y="156.96" width="1.35" height="1.2" fill="#9a9aaa" opacity="0.55"/><rect x="148.52" y="157.38" width="1.11" height="1.0" fill="#9a9aaa" opacity="0.54"/><rect x="150.08" y="157.03" width="1.42" height="1.4" fill="#9a9aaa" opacity="0.40"/><rect x="151.91" y="157.02" width="1.42" height="1.0" fill="#9a9aaa" opacity="0.40"/><rect x="153.74" y="156.90" width="1.24" height="2.0" fill="#9a9aaa" opacity="0.46"/><rect x="155.37" y="156.85" width="0.63" height="1.6" fill="#9a9aaa" opacity="0.49"/>
<rect x="162.50" y="157.08" width="1.40" height="1.6" fill="#9a9aaa" opacity="0.41"/><rect x="164.21" y="157.06" width="1.41" height="1.0" fill="#9a9aaa" opacity="0.55"/><rect x="166.09" y="156.99" width="1.42" height="1.2" fill="#9a9aaa" opacity="0.45"/><rect x="167.90" y="157.27" width="1.46" height="1.0" fill="#9a9aaa" opacity="0.50"/><rect x="169.57" y="157.04" width="1.15" height="1.2" fill="#9a9aaa" opacity="0.44"/><rect x="170.90" y="157.34" width="1.12" height="1.0" fill="#9a9aaa" opacity="0.48"/><rect x="174.21" y="156.88" width="1.04" height="1.6" fill="#9a9aaa" opacity="0.39"/><rect x="175.61" y="156.65" width="1.32" height="2.0" fill="#9a9aaa" opacity="0.40"/><rect x="177.31" y="157.09" width="0.99" height="1.6" fill="#9a9aaa" opacity="0.48"/>
<rect x="185.30" y="156.98" width="1.23" height="1.6" fill="#9a9aaa" opacity="0.48"/><rect x="187.00" y="156.66" width="1.03" height="2.0" fill="#9a9aaa" opacity="0.43"/><rect x="188.42" y="157.10" width="1.05" height="1.4" fill="#9a9aaa" opacity="0.51"/><rect x="189.66" y="157.12" width="1.25" height="1.4" fill="#9a9aaa" opacity="0.44"/><rect x="191.40" y="156.62" width="1.10" height="2.0" fill="#9a9aaa" opacity="0.44"/><rect x="192.83" y="156.94" width="1.21" height="1.4" fill="#9a9aaa" opacity="0.53"/><rect x="194.41" y="156.83" width="1.35" height="1.4" fill="#9a9aaa" opacity="0.44"/><rect x="196.00" y="156.55" width="1.21" height="2.0" fill="#9a9aaa" opacity="0.44"/><rect x="199.24" y="156.81" width="1.05" height="2.0" fill="#9a9aaa" opacity="0.41"/><rect x="200.63" y="156.69" width="1.31" height="2.0" fill="#9a9aaa" opacity="0.45"/><rect x="202.21" y="157.39" width="1.48" height="1.0" fill="#9a9aaa" opacity="0.45"/><rect x="203.86" y="156.84" width="0.34" height="1.4" fill="#9a9aaa" opacity="0.41"/></g></defs></svg>
<div class="card" style="left:699px;top:87px">
  <div class="thumb" style="background:#0c0c1d"><svg width="280" height="160" viewBox="0 0 280 160"><use href="#codeimg"/></svg></div>
  <div class="title">tricky 4</div>
  <div class="meta">Music • Invalid date</div>
  <div class="addr">0x2103308...</div>
  <svg class="chk" viewBox="0 0 12 9"><path d="M0.8 4.7 L4.3 8.1 L11.3 0.9" fill="none" stroke="#12990f" stroke-width="1.5"/></svg>
</div>
<div class="card" style="left:1039px;top:87px">
  <div class="thumb" style="background:#0c0c1d"><svg width="280" height="160" viewBox="0 0 280 160"><use href="#codeimg"/></svg></div>
  <div class="title">tricky 3</div>
  <div class="meta">Music • Invalid date</div>
  <div class="addr">0x2103308...</div>
  <svg class="chk" viewBox="0 0 12 9"><path d="M0.8 4.7 L4.3 8.1 L11.3 0.9" fill="none" stroke="#12990f" stroke-width="1.5"/></svg>
</div>
<div class="card" style="left:1379px;top:87px">
  <div class="thumb" style="background:#0c0c1d"><svg width="280" height="160" viewBox="0 0 280 160"><use href="#codeimg"/></svg></div>
  <div class="title">tricky 3</div>
  <div class="meta">Music • Invalid date</div>
  <div class="addr">0x2103308...</div>
  <svg class="chk" viewBox="0 0 12 9"><path d="M0.8 4.7 L4.3 8.1 L11.3 0.9" fill="none" stroke="#12990f" stroke-width="1.5"/></svg>
</div>
<div class="card" style="left:19px;top:391px">
  <div class="thumb" style="background:#022250"><svg width="280" height="160" viewBox="0 0 280 160"><rect x="0" y="0" width="280" height="160" fill="#022250"/>
<ellipse cx="311.32" cy="71.52" rx="4.6" ry="3.2" transform="rotate(94.6 311.32 71.52)" fill="none" stroke="#f2f2f2" stroke-width="1.8"/>
<line x1="310.61" y1="77.33" x2="309.43" y2="82.39" stroke="#f2f2f2" stroke-width="1.3"/>
<ellipse cx="307.49" cy="87.91" rx="4.6" ry="3.2" transform="rotate(111.7 307.49 87.91)" fill="none" stroke="#f2f2f2" stroke-width="1.8"/>
<line x1="305.09" y1="93.26" x2="302.47" y2="97.75" stroke="#f2f2f2" stroke-width="1.3"/>
<ellipse cx="298.99" cy="102.46" rx="4.6" ry="3.2" transform="rotate(128.9 298.99 102.46)" fill="none" stroke="#f2f2f2" stroke-width="1.8"/>
<line x1="295.13" y1="106.86" x2="291.30" y2="110.38" stroke="#f2f2f2" stroke-width="1.3"/>
<ellipse cx="286.58" cy="113.85" rx="4.6" ry="3.2" transform="rotate(146.0 286.58 113.85)" fill="none" stroke="#f2f2f2" stroke-width="1.8"/>
<line x1="281.60" y1="116.92" x2="276.90" y2="119.15" stroke="#f2f2f2" stroke-width="1.3"/>
<ellipse cx="271.37" cy="121.08" rx="4.6" ry="3.2" transform="rotate(163.2 271.37 121.08)" fill="none" stroke="#f2f2f2" stroke-width="1.8"/>
<line x1="265.70" y1="122.54" x2="260.56" y2="123.29" stroke="#f2f2f2" stroke-width="1.3"/>
<ellipse cx="254.71" cy="123.50" rx="4.6" ry="3.2" transform="rotate(180.3 254.71 123.50)" fill="none" stroke="#f2f2f2" stroke-width="1.8"/>
<line x1="248.86" y1="123.23" x2="243.72" y2="122.42" stroke="#f2f2f2" stroke-width="1.3"/>
<ellipse cx="238.07" cy="120.90" rx="4.6" ry="3.2" transform="rotate(197.4 238.07 120.90)" fill="none" stroke="#f2f2f2" stroke-width="1.8"/>
<line x1="232.56" y1="118.92" x2="227.88" y2="116.64" stroke="#f2f2f2" stroke-width="1.3"/>
<ellipse cx="222.93" cy="113.52" rx="4.6" ry="3.2" transform="rotate(214.6 222.93 113.52)" fill="none" stroke="#f2f2f2" stroke-width="1.8"/>
<line x1="218.25" y1="110.00" x2="214.46" y2="106.44" stroke="#f2f2f2" stroke-width="1.3"/>
<ellipse cx="210.64" cy="102.00" rx="4.6" ry="3.2" transform="rotate(231.7 210.64 102.00)" fill="none" stroke="#f2f2f2" stroke-width="1.8"/>
<line x1="207.21" y1="97.25" x2="204.64" y2="92.74" stroke="#f2f2f2" stroke-width="1.3"/>
<ellipse cx="202.30" cy="87.37" rx="4.6" ry="3.2" transform="rotate(248.9 202.30 87.37)" fill="none" stroke="#f2f2f2" stroke-width="1.8"/>
<line x1="200.42" y1="81.82" x2="199.29" y2="76.75" stroke="#f2f2f2" stroke-width="1.3"/>
<ellipse cx="198.64" cy="70.93" rx="4.6" ry="3.2" transform="rotate(266.0 198.64 70.93)" fill="none" stroke="#f2f2f2" stroke-width="1.8"/>
<line x1="198.47" y1="65.08" x2="198.89" y2="59.89" stroke="#f2f2f2" stroke-width="1.3"/>
<ellipse cx="199.98" cy="54.14" rx="4.6" ry="3.2" transform="rotate(283.2 199.98 54.14)" fill="none" stroke="#f2f2f2" stroke-width="1.8"/>
<line x1="201.55" y1="48.50" x2="203.48" y2="43.67" stroke="#f2f2f2" stroke-width="1.3"/>
<ellipse cx="206.22" cy="38.50" rx="4.6" ry="3.2" transform="rotate(300.3 206.22 38.50)" fill="none" stroke="#f2f2f2" stroke-width="1.8"/>
<line x1="209.38" y1="33.57" x2="212.64" y2="29.52" stroke="#f2f2f2" stroke-width="1.3"/>
<ellipse cx="216.79" cy="25.38" rx="4.6" ry="3.2" transform="rotate(317.4 216.79 25.38)" fill="none" stroke="#f2f2f2" stroke-width="1.8"/>
<line x1="221.26" y1="21.61" x2="225.57" y2="18.70" stroke="#f2f2f2" stroke-width="1.3"/>
<ellipse cx="230.75" cy="15.97" rx="4.6" ry="3.2" transform="rotate(334.6 230.75 15.97)" fill="none" stroke="#f2f2f2" stroke-width="1.8"/>
<line x1="236.14" y1="13.68" x2="241.12" y2="12.17" stroke="#f2f2f2" stroke-width="1.3"/>
<ellipse cx="246.87" cy="11.09" rx="4.6" ry="3.2" transform="rotate(351.7 246.87 11.09)" fill="none" stroke="#f2f2f2" stroke-width="1.8"/>
<line x1="252.69" y1="10.49" x2="257.89" y2="10.51" stroke="#f2f2f2" stroke-width="1.3"/>
<ellipse cx="263.71" cy="11.18" rx="4.6" ry="3.2" transform="rotate(368.9 263.71 11.18)" fill="none" stroke="#f2f2f2" stroke-width="1.8"/>
<line x1="269.45" y1="12.32" x2="274.41" y2="13.88" stroke="#f2f2f2" stroke-width="1.3"/>
<ellipse cx="279.78" cy="16.22" rx="4.6" ry="3.2" transform="rotate(386.0 279.78 16.22)" fill="none" stroke="#f2f2f2" stroke-width="1.8"/>
<line x1="284.93" y1="19.01" x2="289.21" y2="21.96" stroke="#f2f2f2" stroke-width="1.3"/>
<ellipse cx="293.64" cy="25.78" rx="4.6" ry="3.2" transform="rotate(403.2 293.64 25.78)" fill="none" stroke="#f2f2f2" stroke-width="1.8"/>
<line x1="297.75" y1="29.96" x2="300.97" y2="34.04" stroke="#f2f2f2" stroke-width="1.3"/>
<ellipse cx="304.08" cy="39.00" rx="4.6" ry="3.2" transform="rotate(420.3 304.08 39.00)" fill="none" stroke="#f2f2f2" stroke-width="1.8"/>
<line x1="306.76" y1="44.21" x2="308.64" y2="49.06" stroke="#f2f2f2" stroke-width="1.3"/>
<ellipse cx="310.15" cy="54.71" rx="4.6" ry="3.2" transform="rotate(437.4 310.15 54.71)" fill="none" stroke="#f2f2f2" stroke-width="1.8"/>
<line x1="311.18" y1="60.48" x2="311.54" y2="65.66" stroke="#f2f2f2" stroke-width="1.3"/>
<clipPath id="inner"><circle cx="255.7" cy="67.4" r="34.5"/></clipPath>
<g clip-path="url(#inner)" fill="#2fb0ab"><path d="M230.7 88 L242.5 78 L242.5 110 L230.7 110 Z"/><path d="M248.5 76 L260.3 66 L260.3 110 L248.5 110 Z"/><path d="M266.3 60 L278.1 50 L278.1 110 L266.3 110 Z"/></g>
<path d="M222.71 77.49 A34.5 34.5 0 0 1 281.34 44.31" fill="none" stroke="#ebe7dc" stroke-width="3"/>
<path d="M225.82 84.65 A34.5 34.5 0 0 0 289.68 73.39" fill="none" stroke="#ebe7dc" stroke-width="3"/>
<path d="M224 83.5 L248.5 60 L248.5 73 L282 43" fill="none" stroke="#ebe7dc" stroke-width="3" stroke-linejoin="miter"/></svg>
  <div style="position:absolute;left:0;top:0;width:280px;height:160px;color:#d5e4f2;font-size:55.7px;line-height:60px;-webkit-text-stroke:0.9px #d5e4f2">
    <span style="position:absolute;left:-28px;top:36.5px">A</span>
    <span style="position:absolute;left:7px;top:36.5px;display:inline-block;transform:scaleX(1.1);transform-origin:0 0">d</span>
    <span style="position:absolute;left:39px;top:36.5px;display:inline-block;transform:scaleX(0.84);transform-origin:0 0">C</span>
    <span style="position:absolute;left:75px;top:36.5px">h</span>
    <span style="position:absolute;left:106px;top:36.5px">a</span>
    <span style="position:absolute;left:140px;top:36.5px">i</span>
    <span style="position:absolute;left:154px;top:36.5px">n</span>
  </div>
  <div style="position:absolute;left:0;top:0;width:280px;height:160px;color:#dce8f4;font-size:23.6px;line-height:24px"><span class="tg" style="position:absolute;left:-6.5px;top:121px;display:inline-block;transform-origin:0 0;transform:scaleX(0.7)">D</span><span class="tg" style="position:absolute;left:7.5px;top:121px;display:inline-block;transform-origin:0 0;transform:scaleX(0.7)">S</span><span class="tg" style="position:absolute;left:26.0px;top:121px;display:inline-block;transform-origin:0 0;transform:scaleX(0.7)">O</span><span class="tg" style="position:absolute;left:38.1px;top:121px;display:inline-block;transform-origin:0 0;transform:scaleX(0.7)">N</span><span class="tg" style="position:absolute;left:57.8px;top:121px;display:inline-block;transform-origin:0 0;transform:scaleX(0.7)">B</span><span class="tg" style="position:absolute;left:69.9px;top:121px;display:inline-block;transform-origin:0 0;transform:scaleX(0.7)">L</span><span class="tg" style="position:absolute;left:80.1px;top:121px;display:inline-block;transform-origin:0 0;transform:scaleX(0.7)">O</span><span class="tg" style="position:absolute;left:92.8px;top:121px;display:inline-block;transform-origin:0 0;transform:scaleX(0.7)">C</span><span class="tg" style="position:absolute;left:104.8px;top:121px;display:inline-block;transform-origin:0 0;transform:scaleX(0.7)">K</span><span class="tg" style="position:absolute;left:116.9px;top:121px;display:inline-block;transform-origin:0 0;transform:scaleX(0.7)">C</span><span class="tg" style="position:absolute;left:129.6px;top:121px;display:inline-block;transform-origin:0 0;transform:scaleX(0.7)">H</span><span class="tg" style="position:absolute;left:141.1px;top:121px;display:inline-block;transform-origin:0 0;transform:scaleX(0.7)">A</span><span class="tg" style="position:absolute;left:155.1px;top:121px;display:inline-block;transform-origin:0 0;transform:scaleX(0.7)">I</span><span class="tg" style="position:absolute;left:160.8px;top:121px;display:inline-block;transform-origin:0 0;transform:scaleX(0.7)">N</span></div>
  </div>
  <div class="title">tricky two</div>
  <div class="meta">Music • Invalid date</div>
  <div class="addr">0x2103308...</div>
  <svg class="chk" viewBox="0 0 12 9"><path d="M0.8 4.7 L4.3 8.1 L11.3 0.9" fill="none" stroke="#12990f" stroke-width="1.5"/></svg>
</div>
</body></html>
